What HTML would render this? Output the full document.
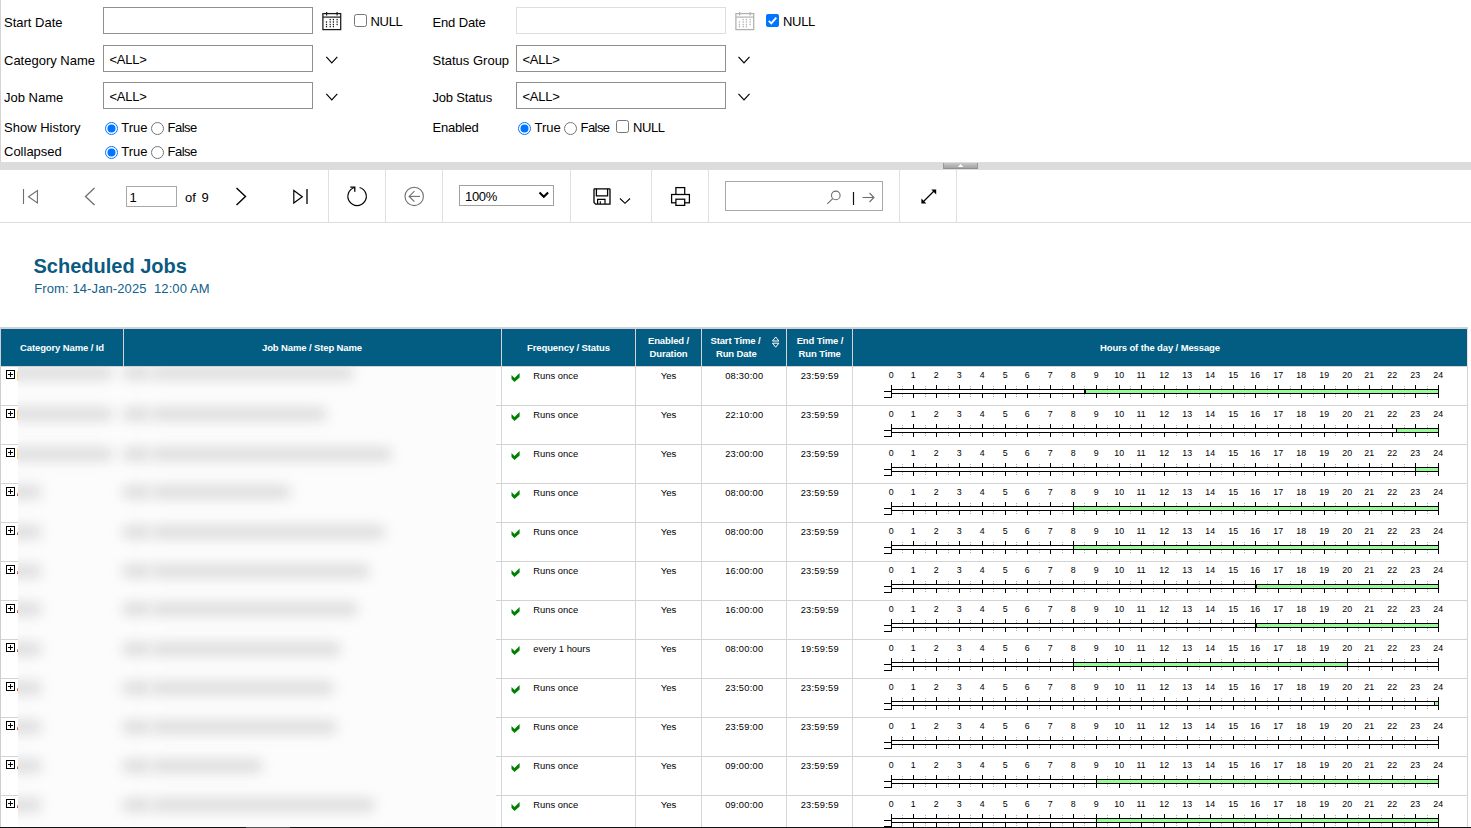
<!DOCTYPE html><html><head><meta charset="utf-8"><style>
html,body{margin:0;padding:0;}
body{width:1471px;height:828px;overflow:hidden;position:relative;background:#fff;font-family:"Liberation Sans",sans-serif;color:#000;}
.t{position:absolute;white-space:nowrap;}
.c{width:200px;text-align:center;}
.b{position:absolute;box-sizing:border-box;}
svg{position:absolute;overflow:visible;}
.bl{position:absolute;box-sizing:border-box;border-radius:3px;}
</style></head><body>
<div class="b" style="left:0px;top:0px;width:1px;height:162px;background:#d4d4d4"></div>
<div class="t" style="left:4.00px;top:16.00px;font-size:13px;line-height:13px;">Start Date</div>
<div class="t" style="left:4.00px;top:54.00px;font-size:13px;line-height:13px;">Category Name</div>
<div class="t" style="left:4.00px;top:91.00px;font-size:13px;line-height:13px;">Job Name</div>
<div class="t" style="left:4.00px;top:121.00px;font-size:13px;line-height:13px;">Show History</div>
<div class="t" style="left:4.00px;top:145.00px;font-size:13px;line-height:13px;">Collapsed</div>
<div class="t" style="left:432.50px;top:16.00px;font-size:13px;line-height:13px;letter-spacing:-0.15px">End Date</div>
<div class="t" style="left:432.50px;top:54.00px;font-size:13px;line-height:13px;">Status Group</div>
<div class="t" style="left:432.50px;top:91.00px;font-size:13px;line-height:13px;letter-spacing:-0.2px">Job Status</div>
<div class="t" style="left:432.50px;top:121.00px;font-size:13px;line-height:13px;letter-spacing:-0.25px">Enabled</div>
<div class="b" style="left:103px;top:7px;width:210px;height:27px;border:1px solid #8f8f8f;background:#fff"></div>
<div class="b" style="left:103px;top:45px;width:210px;height:27px;border:1px solid #8f8f8f;background:#fff"></div>
<div class="b" style="left:103px;top:82px;width:210px;height:27px;border:1px solid #8f8f8f;background:#fff"></div>
<div class="b" style="left:516px;top:7px;width:210px;height:27px;border:1px solid #dedede;background:#fff"></div>
<div class="b" style="left:516px;top:45px;width:210px;height:27px;border:1px solid #8f8f8f;background:#fff"></div>
<div class="b" style="left:516px;top:82px;width:210px;height:27px;border:1px solid #8f8f8f;background:#fff"></div>
<div class="t" style="left:109.50px;top:53.00px;font-size:13px;line-height:13px;letter-spacing:-0.25px">&lt;ALL&gt;</div>
<div class="t" style="left:109.50px;top:90.00px;font-size:13px;line-height:13px;letter-spacing:-0.25px">&lt;ALL&gt;</div>
<div class="t" style="left:522.50px;top:53.00px;font-size:13px;line-height:13px;letter-spacing:-0.25px">&lt;ALL&gt;</div>
<div class="t" style="left:522.50px;top:90.00px;font-size:13px;line-height:13px;letter-spacing:-0.25px">&lt;ALL&gt;</div>
<svg style="left:0;top:0" width="1" height="1"><polyline points="326.3,56.9 331.8,62.9 337.3,56.9" fill="none" stroke="#000" stroke-width="1.15"/></svg>
<svg style="left:0;top:0" width="1" height="1"><polyline points="326.3,93.9 331.8,99.9 337.3,93.9" fill="none" stroke="#000" stroke-width="1.15"/></svg>
<svg style="left:0;top:0" width="1" height="1"><polyline points="738.5,56.9 744,62.9 749.5,56.9" fill="none" stroke="#000" stroke-width="1.15"/></svg>
<svg style="left:0;top:0" width="1" height="1"><polyline points="738.5,93.9 744,99.9 749.5,93.9" fill="none" stroke="#000" stroke-width="1.15"/></svg>
<svg style="left:322px;top:12px" width="19" height="18" viewBox="0 0 19 18"><rect x="0.9" y="1.6" width="17.8" height="16" fill="none" stroke="#1a1a1a" stroke-width="1.25"/><line x1="0.9" y1="5.1" x2="18.7" y2="5.1" stroke="#1a1a1a" stroke-width="1.2"/><line x1="4.6" y1="0" x2="4.6" y2="3.4" stroke="#1a1a1a" stroke-width="1.2"/><line x1="15.1" y1="0" x2="15.1" y2="3.4" stroke="#1a1a1a" stroke-width="1.2"/><rect x="3.9" y="9.3" width="1.2" height="1.4" fill="#1a1a1a"/><rect x="3.9" y="11.8" width="1.2" height="1.4" fill="#1a1a1a"/><rect x="3.9" y="13.9" width="1.2" height="1.4" fill="#1a1a1a"/><rect x="7.6" y="6.9" width="1.2" height="1.4" fill="#1a1a1a"/><rect x="7.6" y="9.3" width="1.2" height="1.4" fill="#1a1a1a"/><rect x="7.6" y="11.8" width="1.2" height="1.4" fill="#1a1a1a"/><rect x="7.6" y="13.9" width="1.2" height="1.4" fill="#1a1a1a"/><rect x="10.8" y="6.9" width="1.2" height="1.4" fill="#1a1a1a"/><rect x="10.8" y="9.3" width="1.2" height="1.4" fill="#1a1a1a"/><rect x="10.8" y="11.8" width="1.2" height="1.4" fill="#1a1a1a"/><rect x="10.8" y="13.9" width="1.2" height="1.4" fill="#1a1a1a"/><rect x="14.5" y="6.9" width="1.2" height="1.4" fill="#1a1a1a"/><rect x="14.5" y="9.3" width="1.2" height="1.4" fill="#1a1a1a"/><rect x="14.5" y="11.8" width="1.2" height="1.4" fill="#1a1a1a"/></svg>
<svg style="left:735px;top:12px" width="19" height="18" viewBox="0 0 19 18"><rect x="0.9" y="1.6" width="17.8" height="16" fill="none" stroke="#b0b0b0" stroke-width="1.25"/><line x1="0.9" y1="5.1" x2="18.7" y2="5.1" stroke="#b0b0b0" stroke-width="1.2"/><line x1="4.6" y1="0" x2="4.6" y2="3.4" stroke="#b0b0b0" stroke-width="1.2"/><line x1="15.1" y1="0" x2="15.1" y2="3.4" stroke="#b0b0b0" stroke-width="1.2"/><rect x="3.9" y="9.3" width="1.2" height="1.4" fill="#b0b0b0"/><rect x="3.9" y="11.8" width="1.2" height="1.4" fill="#b0b0b0"/><rect x="3.9" y="13.9" width="1.2" height="1.4" fill="#b0b0b0"/><rect x="7.6" y="6.9" width="1.2" height="1.4" fill="#b0b0b0"/><rect x="7.6" y="9.3" width="1.2" height="1.4" fill="#b0b0b0"/><rect x="7.6" y="11.8" width="1.2" height="1.4" fill="#b0b0b0"/><rect x="7.6" y="13.9" width="1.2" height="1.4" fill="#b0b0b0"/><rect x="10.8" y="6.9" width="1.2" height="1.4" fill="#b0b0b0"/><rect x="10.8" y="9.3" width="1.2" height="1.4" fill="#b0b0b0"/><rect x="10.8" y="11.8" width="1.2" height="1.4" fill="#b0b0b0"/><rect x="10.8" y="13.9" width="1.2" height="1.4" fill="#b0b0b0"/><rect x="14.5" y="6.9" width="1.2" height="1.4" fill="#b0b0b0"/><rect x="14.5" y="9.3" width="1.2" height="1.4" fill="#b0b0b0"/><rect x="14.5" y="11.8" width="1.2" height="1.4" fill="#b0b0b0"/></svg>
<svg style="left:354px;top:14px" width="13" height="13" viewBox="0 0 13 13"><rect x="0.5" y="0.5" width="12" height="12" rx="2" fill="#fff" stroke="#767676" stroke-width="1"/></svg>
<div class="t" style="left:370.50px;top:15.00px;font-size:13px;line-height:13px;letter-spacing:-0.3px">NULL</div>
<svg style="left:766px;top:14px" width="13" height="13" viewBox="0 0 13 13"><rect x="0" y="0" width="13" height="13" rx="2" fill="#0075ff"/><polyline points="2.8,6.8 5.3,9.3 10.3,3.6" fill="none" stroke="#fff" stroke-width="1.9"/></svg>
<div class="t" style="left:783.00px;top:15.00px;font-size:13px;line-height:13px;letter-spacing:-0.3px">NULL</div>
<svg style="left:105px;top:122px" width="13" height="13" viewBox="0 0 13 13"><circle cx="6.5" cy="6.5" r="6" fill="#fff" stroke="#0075ff" stroke-width="1"/><circle cx="6.5" cy="6.5" r="4" fill="#0075ff"/></svg>
<div class="t" style="left:121.30px;top:121.00px;font-size:13px;line-height:13px;">True</div>
<svg style="left:151px;top:122px" width="13" height="13" viewBox="0 0 13 13"><circle cx="6.5" cy="6.5" r="6" fill="#fff" stroke="#767676" stroke-width="1"/></svg>
<div class="t" style="left:167.60px;top:121.00px;font-size:13px;line-height:13px;letter-spacing:-0.55px">False</div>
<svg style="left:105px;top:146px" width="13" height="13" viewBox="0 0 13 13"><circle cx="6.5" cy="6.5" r="6" fill="#fff" stroke="#0075ff" stroke-width="1"/><circle cx="6.5" cy="6.5" r="4" fill="#0075ff"/></svg>
<div class="t" style="left:121.30px;top:145.00px;font-size:13px;line-height:13px;">True</div>
<svg style="left:151px;top:146px" width="13" height="13" viewBox="0 0 13 13"><circle cx="6.5" cy="6.5" r="6" fill="#fff" stroke="#767676" stroke-width="1"/></svg>
<div class="t" style="left:167.60px;top:145.00px;font-size:13px;line-height:13px;letter-spacing:-0.55px">False</div>
<svg style="left:518px;top:122px" width="13" height="13" viewBox="0 0 13 13"><circle cx="6.5" cy="6.5" r="6" fill="#fff" stroke="#0075ff" stroke-width="1"/><circle cx="6.5" cy="6.5" r="4" fill="#0075ff"/></svg>
<div class="t" style="left:534.50px;top:121.00px;font-size:13px;line-height:13px;">True</div>
<svg style="left:564px;top:122px" width="13" height="13" viewBox="0 0 13 13"><circle cx="6.5" cy="6.5" r="6" fill="#fff" stroke="#767676" stroke-width="1"/></svg>
<div class="t" style="left:580.50px;top:121.00px;font-size:13px;line-height:13px;letter-spacing:-0.55px">False</div>
<svg style="left:616px;top:120px" width="13" height="13" viewBox="0 0 13 13"><rect x="0.5" y="0.5" width="12" height="12" rx="2" fill="#fff" stroke="#767676" stroke-width="1"/></svg>
<div class="t" style="left:633.00px;top:121.00px;font-size:13px;line-height:13px;letter-spacing:-0.4px">NULL</div>
<div class="b" style="left:0px;top:162px;width:1471px;height:8px;background:#dcdcdc"></div>
<div class="b" style="left:943px;top:163px;width:35px;height:6px;background:linear-gradient(#c8c8c8,#a4a4a4);border-left:1px solid #999;border-right:1px solid #999;border-bottom:1px solid #909090"></div>
<svg style="left:0;top:0" width="1" height="1"><polygon points="957.8,166.9 960.6,163.9 963.4,166.9" fill="#fff"/></svg>
<div class="b" style="left:0px;top:222px;width:1471px;height:1px;background:#dedede"></div>
<div class="b" style="left:328px;top:170px;width:1px;height:52px;background:#e0e0e0"></div>
<div class="b" style="left:385px;top:170px;width:1px;height:52px;background:#e0e0e0"></div>
<div class="b" style="left:442px;top:170px;width:1px;height:52px;background:#e0e0e0"></div>
<div class="b" style="left:570px;top:170px;width:1px;height:52px;background:#e0e0e0"></div>
<div class="b" style="left:651px;top:170px;width:1px;height:52px;background:#e0e0e0"></div>
<div class="b" style="left:708px;top:170px;width:1px;height:52px;background:#e0e0e0"></div>
<div class="b" style="left:899px;top:170px;width:1px;height:52px;background:#e0e0e0"></div>
<div class="b" style="left:956px;top:170px;width:1px;height:52px;background:#e0e0e0"></div>
<svg style="left:0;top:0" width="1" height="1"><line x1="23.5" y1="189" x2="23.5" y2="204" stroke="#6e6e6e" stroke-width="1.1"/><polygon points="37.4,190.5 37.4,203 28.5,196.8" fill="none" stroke="#6e6e6e" stroke-width="1.1"/></svg>
<svg style="left:0;top:0" width="1" height="1"><polyline points="94.5,188 85.5,196.5 94.5,205" fill="none" stroke="#6e6e6e" stroke-width="1.3"/></svg>
<div class="b" style="left:126px;top:186px;width:51px;height:21px;border:1px solid #a8a8a8;background:#fff"></div>
<div class="t" style="left:129.50px;top:191.00px;font-size:13px;line-height:13px;">1</div>
<div class="t" style="left:185.00px;top:191.00px;font-size:13px;line-height:13px;word-spacing:2px">of 9</div>
<svg style="left:0;top:0" width="1" height="1"><polyline points="236.5,188 245.5,196.5 236.5,205" fill="none" stroke="#000" stroke-width="1.4"/></svg>
<svg style="left:0;top:0" width="1" height="1"><polygon points="293.8,190.5 293.8,203 302.3,196.8" fill="none" stroke="#000" stroke-width="1.2"/><line x1="307" y1="189" x2="307" y2="204" stroke="#000" stroke-width="1.3"/></svg>
<svg style="left:0;top:0" width="1" height="1"><path d="M359.6,187.5 A9.2,9.2 0 1 1 354.6,187.5" fill="none" stroke="#000" stroke-width="1.2"/><path d="M350.3,187.2 H354.8 V191.8" fill="none" stroke="#000" stroke-width="1.3"/></svg>
<svg style="left:0;top:0" width="1" height="1"><circle cx="414.2" cy="196.4" r="9.2" fill="none" stroke="#6e6e6e" stroke-width="1.1"/><line x1="409" y1="196.4" x2="420" y2="196.4" stroke="#6e6e6e" stroke-width="1.1"/><polyline points="414.4,191.2 409.1,196.4 414.4,201.7" fill="none" stroke="#6e6e6e" stroke-width="1.1"/></svg>
<div class="b" style="left:459px;top:185px;width:95px;height:21px;border:1px solid #a0a0a0;background:#fff"></div>
<div class="t" style="left:465.00px;top:189.50px;font-size:13px;line-height:13px;letter-spacing:-0.3px">100%</div>
<svg style="left:0;top:0" width="1" height="1"><polyline points="539.5,192.5 543.8,196.8 548.1,192.5" fill="none" stroke="#000" stroke-width="2"/></svg>
<svg style="left:593px;top:188px" width="18" height="17" viewBox="0 0 18 17"><path d="M1.6,0.8 H16.3 Q17,0.8 17,1.5 V16.1 H2.7 L1,14.4 V1.5 Q1,0.8 1.6,0.8 Z" fill="none" stroke="#000" stroke-width="1.3"/><path d="M3.4,0.8 V7.9 H14.6 V0.8" fill="none" stroke="#000" stroke-width="1.3"/><path d="M4.6,16.1 V11.3 H12 V16.1" fill="none" stroke="#000" stroke-width="1.2"/><line x1="7.3" y1="13.3" x2="7.3" y2="16" stroke="#000" stroke-width="1.1"/></svg>
<svg style="left:0;top:0" width="1" height="1"><polyline points="620,198.5 625,203.3 630,198.5" fill="none" stroke="#000" stroke-width="1.1"/></svg>
<svg style="left:671px;top:187px" width="19" height="19" viewBox="0 0 19 19"><rect x="4.9" y="0.6" width="8.8" height="7" fill="#fff" stroke="#000" stroke-width="1.25"/><rect x="0.6" y="7.5" width="17.8" height="8.3" fill="#fff" stroke="#000" stroke-width="1.25"/><rect x="4.9" y="12.2" width="8.8" height="6.2" fill="#fff" stroke="#000" stroke-width="1.25"/></svg>
<div class="b" style="left:725px;top:181px;width:158px;height:30px;border:1px solid #a8a8a8;background:#fff"></div>
<svg style="left:0;top:0" width="1" height="1"><circle cx="835.8" cy="195.4" r="4.3" fill="none" stroke="#6e6e6e" stroke-width="1.1"/><line x1="832.7" y1="198.6" x2="827.3" y2="203.8" stroke="#6e6e6e" stroke-width="1.1"/><line x1="853.5" y1="192" x2="853.5" y2="205" stroke="#111" stroke-width="1.2"/><line x1="862.5" y1="197.5" x2="874" y2="197.5" stroke="#6e6e6e" stroke-width="1.1"/><polyline points="869.5,193 874,197.5 869.5,202" fill="none" stroke="#6e6e6e" stroke-width="1.1"/></svg>
<svg style="left:0;top:0" width="1" height="1"><line x1="923" y1="202" x2="934" y2="191" stroke="#000" stroke-width="1.3"/><polygon points="931.3,189.6 936.2,189.6 936.2,194.5" fill="#000"/><polygon points="921.4,198.6 921.4,203.5 926.3,203.5" fill="#000"/></svg>
<div class="t" style="left:33.50px;top:256.07px;font-size:20px;line-height:20px;color:#0b5a82;font-weight:bold;">Scheduled Jobs</div>
<div class="t" style="left:34.30px;top:282.00px;font-size:13px;line-height:13px;color:#12608a;letter-spacing:0.1px">From: 14-Jan-2025&nbsp; 12:00 AM</div>
<div class="b" style="left:0px;top:327px;width:1468px;height:2px;background:#d2d2d2"></div>
<div class="b" style="left:1px;top:329px;width:1466px;height:37px;background:#035d82"></div>
<div class="b" style="left:0px;top:327px;width:1px;height:501px;background:#cfcfcf"></div>
<div class="b" style="left:1467px;top:329px;width:1px;height:37px;background:#e6e0e0"></div>
<div class="b" style="left:1467px;top:366px;width:1px;height:462px;background:#d3d3d3"></div>
<div class="b" style="left:123px;top:329px;width:1px;height:37px;background:#d3d3d3"></div>
<div class="b" style="left:501px;top:329px;width:1px;height:37px;background:#d3d3d3"></div>
<div class="b" style="left:635px;top:329px;width:1px;height:37px;background:#d3d3d3"></div>
<div class="b" style="left:701px;top:329px;width:1px;height:37px;background:#d3d3d3"></div>
<div class="b" style="left:786px;top:329px;width:1px;height:37px;background:#d3d3d3"></div>
<div class="b" style="left:852px;top:329px;width:1px;height:37px;background:#d3d3d3"></div>
<div class="t c" style="left:-38.00px;top:343.36px;font-size:9.5px;line-height:9.5px;color:#fff;font-weight:bold;letter-spacing:-0.12px">Category Name / Id</div>
<div class="t c" style="left:212.00px;top:343.36px;font-size:9.5px;line-height:9.5px;color:#fff;font-weight:bold;letter-spacing:-0.12px">Job Name / Step Name</div>
<div class="t c" style="left:468.50px;top:343.36px;font-size:9.5px;line-height:9.5px;color:#fff;font-weight:bold;letter-spacing:-0.12px">Frequency / Status</div>
<div class="t c" style="left:568.50px;top:336.46px;font-size:9.5px;line-height:9.5px;color:#fff;font-weight:bold;letter-spacing:-0.12px">Enabled /</div>
<div class="t c" style="left:568.50px;top:349.46px;font-size:9.5px;line-height:9.5px;color:#fff;font-weight:bold;letter-spacing:-0.12px">Duration</div>
<div class="t c" style="left:635.50px;top:336.46px;font-size:9.5px;line-height:9.5px;color:#fff;font-weight:bold;letter-spacing:-0.12px">Start Time /</div>
<div class="t c" style="left:636.30px;top:349.46px;font-size:9.5px;line-height:9.5px;color:#fff;font-weight:bold;letter-spacing:-0.12px">Run Date</div>
<div class="t c" style="left:720.00px;top:336.46px;font-size:9.5px;line-height:9.5px;color:#fff;font-weight:bold;letter-spacing:-0.12px">End Time /</div>
<div class="t c" style="left:719.70px;top:349.46px;font-size:9.5px;line-height:9.5px;color:#fff;font-weight:bold;letter-spacing:-0.12px">Run Time</div>
<div class="t c" style="left:1060.00px;top:343.36px;font-size:9.5px;line-height:9.5px;color:#fff;font-weight:bold;letter-spacing:-0.12px">Hours of the day / Message</div>
<svg style="left:0;top:0" width="1" height="1"><polygon points="772.5,341 775.7,337 778.9,341" fill="none" stroke="#fff" stroke-width="1"/><polygon points="772.5,343.2 775.7,347.2 778.9,343.2" fill="none" stroke="#fff" stroke-width="1"/></svg>
<div class="b" style="left:1px;top:366px;width:1466px;height:1px;background:#d3d3d3"></div>
<div class="b" style="left:123px;top:366px;width:1px;height:39px;background:#d6d6d6"></div>
<div class="b" style="left:501px;top:366px;width:1px;height:39px;background:#d6d6d6"></div>
<div class="b" style="left:635px;top:366px;width:1px;height:39px;background:#d6d6d6"></div>
<div class="b" style="left:701px;top:366px;width:1px;height:39px;background:#d6d6d6"></div>
<div class="b" style="left:786px;top:366px;width:1px;height:39px;background:#d6d6d6"></div>
<div class="b" style="left:852px;top:366px;width:1px;height:39px;background:#d6d6d6"></div>
<svg style="left:6px;top:370px" width="9" height="9"><rect x="0.5" y="0.5" width="8" height="8" fill="#fff" stroke="#000" stroke-width="1"/><path d="M2 4.5H7M4.5 2V7" stroke="#000" stroke-width="1"/></svg>
<svg style="left:0;top:366px" width="1" height="1"><polygon points="511.5,9 514.5,12 519.6,7 519.6,11.5 514.5,16 511.5,13" fill="#008000"/></svg>
<div class="t" style="left:533.30px;top:371.44px;font-size:9.4px;line-height:9.4px;">Runs once</div>
<div class="t c" style="left:568.50px;top:371.27px;font-size:9.6px;line-height:9.6px;">Yes</div>
<div class="t c" style="left:644.30px;top:372.03px;font-size:9.3px;line-height:9.3px;letter-spacing:0.25px">08:30:00</div>
<div class="t c" style="left:719.80px;top:372.03px;font-size:9.3px;line-height:9.3px;letter-spacing:0.25px">23:59:59</div>
<svg style="left:0;top:366px" width="1" height="1"><g transform="scale(0.9 1)" font-family="Liberation Sans" font-size="9.8" text-anchor="middle" fill="#000"><text x="990.22" y="12">0</text><text x="1014.67" y="12">1</text><text x="1040.22" y="12">2</text><text x="1065.78" y="12">3</text><text x="1091.33" y="12">4</text><text x="1116.89" y="12">5</text><text x="1141.33" y="12">6</text><text x="1166.89" y="12">7</text><text x="1192.44" y="12">8</text><text x="1218.00" y="12">9</text><text x="1243.56" y="12">10</text><text x="1268.00" y="12">11</text><text x="1293.56" y="12">12</text><text x="1319.11" y="12">13</text><text x="1344.67" y="12">14</text><text x="1370.22" y="12">15</text><text x="1394.67" y="12">16</text><text x="1420.22" y="12">17</text><text x="1445.78" y="12">18</text><text x="1471.33" y="12">19</text><text x="1496.89" y="12">20</text><text x="1521.33" y="12">21</text><text x="1546.89" y="12">22</text><text x="1572.44" y="12">23</text><text x="1598.00" y="12">24</text></g><path d="M891 19h1v13h-1zM913 19h1v13h-1zM936 19h1v13h-1zM959 19h1v13h-1zM982 19h1v13h-1zM1005 19h1v13h-1zM1027 19h1v13h-1zM1050 19h1v13h-1zM1073 19h1v13h-1zM1096 19h1v13h-1zM1119 19h1v13h-1zM1141 19h1v13h-1zM1164 19h1v13h-1zM1187 19h1v13h-1zM1210 19h1v13h-1zM1233 19h1v13h-1zM1255 19h1v13h-1zM1278 19h1v13h-1zM1301 19h1v13h-1zM1324 19h1v13h-1zM1347 19h1v13h-1zM1369 19h1v13h-1zM1392 19h1v13h-1zM1415 19h1v13h-1zM1438 19h1v13h-1zM891 23h548v5h-548zM884 25h8v1h-8zM884 31h8v1h-8z" fill="#000" shape-rendering="crispEdges"/><path d="M902 20h1v1h-1zM902 22h1v1h-1zM902 28h1v1h-1zM902 30h1v1h-1zM925 20h1v1h-1zM925 22h1v1h-1zM925 28h1v1h-1zM925 30h1v1h-1zM948 20h1v1h-1zM948 22h1v1h-1zM948 28h1v1h-1zM948 30h1v1h-1zM970 20h1v1h-1zM970 22h1v1h-1zM970 28h1v1h-1zM970 30h1v1h-1zM993 20h1v1h-1zM993 22h1v1h-1zM993 28h1v1h-1zM993 30h1v1h-1zM1016 20h1v1h-1zM1016 22h1v1h-1zM1016 28h1v1h-1zM1016 30h1v1h-1zM1039 20h1v1h-1zM1039 22h1v1h-1zM1039 28h1v1h-1zM1039 30h1v1h-1zM1062 20h1v1h-1zM1062 22h1v1h-1zM1062 28h1v1h-1zM1062 30h1v1h-1zM1084 20h1v1h-1zM1084 22h1v1h-1zM1084 28h1v1h-1zM1084 30h1v1h-1zM1107 20h1v1h-1zM1107 22h1v1h-1zM1107 28h1v1h-1zM1107 30h1v1h-1zM1130 20h1v1h-1zM1130 22h1v1h-1zM1130 28h1v1h-1zM1130 30h1v1h-1zM1153 20h1v1h-1zM1153 22h1v1h-1zM1153 28h1v1h-1zM1153 30h1v1h-1zM1176 20h1v1h-1zM1176 22h1v1h-1zM1176 28h1v1h-1zM1176 30h1v1h-1zM1199 20h1v1h-1zM1199 22h1v1h-1zM1199 28h1v1h-1zM1199 30h1v1h-1zM1221 20h1v1h-1zM1221 22h1v1h-1zM1221 28h1v1h-1zM1221 30h1v1h-1zM1244 20h1v1h-1zM1244 22h1v1h-1zM1244 28h1v1h-1zM1244 30h1v1h-1zM1267 20h1v1h-1zM1267 22h1v1h-1zM1267 28h1v1h-1zM1267 30h1v1h-1zM1290 20h1v1h-1zM1290 22h1v1h-1zM1290 28h1v1h-1zM1290 30h1v1h-1zM1313 20h1v1h-1zM1313 22h1v1h-1zM1313 28h1v1h-1zM1313 30h1v1h-1zM1335 20h1v1h-1zM1335 22h1v1h-1zM1335 28h1v1h-1zM1335 30h1v1h-1zM1358 20h1v1h-1zM1358 22h1v1h-1zM1358 28h1v1h-1zM1358 30h1v1h-1zM1381 20h1v1h-1zM1381 22h1v1h-1zM1381 28h1v1h-1zM1381 30h1v1h-1zM1404 20h1v1h-1zM1404 22h1v1h-1zM1404 28h1v1h-1zM1404 30h1v1h-1zM1427 20h1v1h-1zM1427 22h1v1h-1zM1427 28h1v1h-1zM1427 30h1v1h-1z" fill="#b0b0b0" shape-rendering="crispEdges"/><g shape-rendering="crispEdges"><rect x="892" y="24" width="192" height="3" fill="#fff"/><rect x="1086" y="24" width="352" height="3" fill="#98fb98"/></g></svg>
<div class="b" style="left:1px;top:405px;width:1466px;height:1px;background:#d3d3d3"></div>
<div class="b" style="left:123px;top:405px;width:1px;height:39px;background:#d6d6d6"></div>
<div class="b" style="left:501px;top:405px;width:1px;height:39px;background:#d6d6d6"></div>
<div class="b" style="left:635px;top:405px;width:1px;height:39px;background:#d6d6d6"></div>
<div class="b" style="left:701px;top:405px;width:1px;height:39px;background:#d6d6d6"></div>
<div class="b" style="left:786px;top:405px;width:1px;height:39px;background:#d6d6d6"></div>
<div class="b" style="left:852px;top:405px;width:1px;height:39px;background:#d6d6d6"></div>
<svg style="left:6px;top:409px" width="9" height="9"><rect x="0.5" y="0.5" width="8" height="8" fill="#fff" stroke="#000" stroke-width="1"/><path d="M2 4.5H7M4.5 2V7" stroke="#000" stroke-width="1"/></svg>
<svg style="left:0;top:405px" width="1" height="1"><polygon points="511.5,9 514.5,12 519.6,7 519.6,11.5 514.5,16 511.5,13" fill="#008000"/></svg>
<div class="t" style="left:533.30px;top:410.44px;font-size:9.4px;line-height:9.4px;">Runs once</div>
<div class="t c" style="left:568.50px;top:410.27px;font-size:9.6px;line-height:9.6px;">Yes</div>
<div class="t c" style="left:644.30px;top:411.03px;font-size:9.3px;line-height:9.3px;letter-spacing:0.25px">22:10:00</div>
<div class="t c" style="left:719.80px;top:411.03px;font-size:9.3px;line-height:9.3px;letter-spacing:0.25px">23:59:59</div>
<svg style="left:0;top:405px" width="1" height="1"><g transform="scale(0.9 1)" font-family="Liberation Sans" font-size="9.8" text-anchor="middle" fill="#000"><text x="990.22" y="12">0</text><text x="1014.67" y="12">1</text><text x="1040.22" y="12">2</text><text x="1065.78" y="12">3</text><text x="1091.33" y="12">4</text><text x="1116.89" y="12">5</text><text x="1141.33" y="12">6</text><text x="1166.89" y="12">7</text><text x="1192.44" y="12">8</text><text x="1218.00" y="12">9</text><text x="1243.56" y="12">10</text><text x="1268.00" y="12">11</text><text x="1293.56" y="12">12</text><text x="1319.11" y="12">13</text><text x="1344.67" y="12">14</text><text x="1370.22" y="12">15</text><text x="1394.67" y="12">16</text><text x="1420.22" y="12">17</text><text x="1445.78" y="12">18</text><text x="1471.33" y="12">19</text><text x="1496.89" y="12">20</text><text x="1521.33" y="12">21</text><text x="1546.89" y="12">22</text><text x="1572.44" y="12">23</text><text x="1598.00" y="12">24</text></g><path d="M891 19h1v13h-1zM913 19h1v13h-1zM936 19h1v13h-1zM959 19h1v13h-1zM982 19h1v13h-1zM1005 19h1v13h-1zM1027 19h1v13h-1zM1050 19h1v13h-1zM1073 19h1v13h-1zM1096 19h1v13h-1zM1119 19h1v13h-1zM1141 19h1v13h-1zM1164 19h1v13h-1zM1187 19h1v13h-1zM1210 19h1v13h-1zM1233 19h1v13h-1zM1255 19h1v13h-1zM1278 19h1v13h-1zM1301 19h1v13h-1zM1324 19h1v13h-1zM1347 19h1v13h-1zM1369 19h1v13h-1zM1392 19h1v13h-1zM1415 19h1v13h-1zM1438 19h1v13h-1zM891 23h548v5h-548zM884 25h8v1h-8zM884 31h8v1h-8z" fill="#000" shape-rendering="crispEdges"/><path d="M902 20h1v1h-1zM902 22h1v1h-1zM902 28h1v1h-1zM902 30h1v1h-1zM925 20h1v1h-1zM925 22h1v1h-1zM925 28h1v1h-1zM925 30h1v1h-1zM948 20h1v1h-1zM948 22h1v1h-1zM948 28h1v1h-1zM948 30h1v1h-1zM970 20h1v1h-1zM970 22h1v1h-1zM970 28h1v1h-1zM970 30h1v1h-1zM993 20h1v1h-1zM993 22h1v1h-1zM993 28h1v1h-1zM993 30h1v1h-1zM1016 20h1v1h-1zM1016 22h1v1h-1zM1016 28h1v1h-1zM1016 30h1v1h-1zM1039 20h1v1h-1zM1039 22h1v1h-1zM1039 28h1v1h-1zM1039 30h1v1h-1zM1062 20h1v1h-1zM1062 22h1v1h-1zM1062 28h1v1h-1zM1062 30h1v1h-1zM1084 20h1v1h-1zM1084 22h1v1h-1zM1084 28h1v1h-1zM1084 30h1v1h-1zM1107 20h1v1h-1zM1107 22h1v1h-1zM1107 28h1v1h-1zM1107 30h1v1h-1zM1130 20h1v1h-1zM1130 22h1v1h-1zM1130 28h1v1h-1zM1130 30h1v1h-1zM1153 20h1v1h-1zM1153 22h1v1h-1zM1153 28h1v1h-1zM1153 30h1v1h-1zM1176 20h1v1h-1zM1176 22h1v1h-1zM1176 28h1v1h-1zM1176 30h1v1h-1zM1199 20h1v1h-1zM1199 22h1v1h-1zM1199 28h1v1h-1zM1199 30h1v1h-1zM1221 20h1v1h-1zM1221 22h1v1h-1zM1221 28h1v1h-1zM1221 30h1v1h-1zM1244 20h1v1h-1zM1244 22h1v1h-1zM1244 28h1v1h-1zM1244 30h1v1h-1zM1267 20h1v1h-1zM1267 22h1v1h-1zM1267 28h1v1h-1zM1267 30h1v1h-1zM1290 20h1v1h-1zM1290 22h1v1h-1zM1290 28h1v1h-1zM1290 30h1v1h-1zM1313 20h1v1h-1zM1313 22h1v1h-1zM1313 28h1v1h-1zM1313 30h1v1h-1zM1335 20h1v1h-1zM1335 22h1v1h-1zM1335 28h1v1h-1zM1335 30h1v1h-1zM1358 20h1v1h-1zM1358 22h1v1h-1zM1358 28h1v1h-1zM1358 30h1v1h-1zM1381 20h1v1h-1zM1381 22h1v1h-1zM1381 28h1v1h-1zM1381 30h1v1h-1zM1404 20h1v1h-1zM1404 22h1v1h-1zM1404 28h1v1h-1zM1404 30h1v1h-1zM1427 20h1v1h-1zM1427 22h1v1h-1zM1427 28h1v1h-1zM1427 30h1v1h-1z" fill="#b0b0b0" shape-rendering="crispEdges"/><g shape-rendering="crispEdges"><rect x="892" y="24" width="504" height="3" fill="#fff"/><rect x="1397" y="24" width="41" height="3" fill="#98fb98"/></g></svg>
<div class="b" style="left:1px;top:444px;width:1466px;height:1px;background:#d3d3d3"></div>
<div class="b" style="left:123px;top:444px;width:1px;height:39px;background:#d6d6d6"></div>
<div class="b" style="left:501px;top:444px;width:1px;height:39px;background:#d6d6d6"></div>
<div class="b" style="left:635px;top:444px;width:1px;height:39px;background:#d6d6d6"></div>
<div class="b" style="left:701px;top:444px;width:1px;height:39px;background:#d6d6d6"></div>
<div class="b" style="left:786px;top:444px;width:1px;height:39px;background:#d6d6d6"></div>
<div class="b" style="left:852px;top:444px;width:1px;height:39px;background:#d6d6d6"></div>
<svg style="left:6px;top:448px" width="9" height="9"><rect x="0.5" y="0.5" width="8" height="8" fill="#fff" stroke="#000" stroke-width="1"/><path d="M2 4.5H7M4.5 2V7" stroke="#000" stroke-width="1"/></svg>
<svg style="left:0;top:444px" width="1" height="1"><polygon points="511.5,9 514.5,12 519.6,7 519.6,11.5 514.5,16 511.5,13" fill="#008000"/></svg>
<div class="t" style="left:533.30px;top:449.44px;font-size:9.4px;line-height:9.4px;">Runs once</div>
<div class="t c" style="left:568.50px;top:449.27px;font-size:9.6px;line-height:9.6px;">Yes</div>
<div class="t c" style="left:644.30px;top:450.03px;font-size:9.3px;line-height:9.3px;letter-spacing:0.25px">23:00:00</div>
<div class="t c" style="left:719.80px;top:450.03px;font-size:9.3px;line-height:9.3px;letter-spacing:0.25px">23:59:59</div>
<svg style="left:0;top:444px" width="1" height="1"><g transform="scale(0.9 1)" font-family="Liberation Sans" font-size="9.8" text-anchor="middle" fill="#000"><text x="990.22" y="12">0</text><text x="1014.67" y="12">1</text><text x="1040.22" y="12">2</text><text x="1065.78" y="12">3</text><text x="1091.33" y="12">4</text><text x="1116.89" y="12">5</text><text x="1141.33" y="12">6</text><text x="1166.89" y="12">7</text><text x="1192.44" y="12">8</text><text x="1218.00" y="12">9</text><text x="1243.56" y="12">10</text><text x="1268.00" y="12">11</text><text x="1293.56" y="12">12</text><text x="1319.11" y="12">13</text><text x="1344.67" y="12">14</text><text x="1370.22" y="12">15</text><text x="1394.67" y="12">16</text><text x="1420.22" y="12">17</text><text x="1445.78" y="12">18</text><text x="1471.33" y="12">19</text><text x="1496.89" y="12">20</text><text x="1521.33" y="12">21</text><text x="1546.89" y="12">22</text><text x="1572.44" y="12">23</text><text x="1598.00" y="12">24</text></g><path d="M891 19h1v13h-1zM913 19h1v13h-1zM936 19h1v13h-1zM959 19h1v13h-1zM982 19h1v13h-1zM1005 19h1v13h-1zM1027 19h1v13h-1zM1050 19h1v13h-1zM1073 19h1v13h-1zM1096 19h1v13h-1zM1119 19h1v13h-1zM1141 19h1v13h-1zM1164 19h1v13h-1zM1187 19h1v13h-1zM1210 19h1v13h-1zM1233 19h1v13h-1zM1255 19h1v13h-1zM1278 19h1v13h-1zM1301 19h1v13h-1zM1324 19h1v13h-1zM1347 19h1v13h-1zM1369 19h1v13h-1zM1392 19h1v13h-1zM1415 19h1v13h-1zM1438 19h1v13h-1zM891 23h548v5h-548zM884 25h8v1h-8zM884 31h8v1h-8z" fill="#000" shape-rendering="crispEdges"/><path d="M902 20h1v1h-1zM902 22h1v1h-1zM902 28h1v1h-1zM902 30h1v1h-1zM925 20h1v1h-1zM925 22h1v1h-1zM925 28h1v1h-1zM925 30h1v1h-1zM948 20h1v1h-1zM948 22h1v1h-1zM948 28h1v1h-1zM948 30h1v1h-1zM970 20h1v1h-1zM970 22h1v1h-1zM970 28h1v1h-1zM970 30h1v1h-1zM993 20h1v1h-1zM993 22h1v1h-1zM993 28h1v1h-1zM993 30h1v1h-1zM1016 20h1v1h-1zM1016 22h1v1h-1zM1016 28h1v1h-1zM1016 30h1v1h-1zM1039 20h1v1h-1zM1039 22h1v1h-1zM1039 28h1v1h-1zM1039 30h1v1h-1zM1062 20h1v1h-1zM1062 22h1v1h-1zM1062 28h1v1h-1zM1062 30h1v1h-1zM1084 20h1v1h-1zM1084 22h1v1h-1zM1084 28h1v1h-1zM1084 30h1v1h-1zM1107 20h1v1h-1zM1107 22h1v1h-1zM1107 28h1v1h-1zM1107 30h1v1h-1zM1130 20h1v1h-1zM1130 22h1v1h-1zM1130 28h1v1h-1zM1130 30h1v1h-1zM1153 20h1v1h-1zM1153 22h1v1h-1zM1153 28h1v1h-1zM1153 30h1v1h-1zM1176 20h1v1h-1zM1176 22h1v1h-1zM1176 28h1v1h-1zM1176 30h1v1h-1zM1199 20h1v1h-1zM1199 22h1v1h-1zM1199 28h1v1h-1zM1199 30h1v1h-1zM1221 20h1v1h-1zM1221 22h1v1h-1zM1221 28h1v1h-1zM1221 30h1v1h-1zM1244 20h1v1h-1zM1244 22h1v1h-1zM1244 28h1v1h-1zM1244 30h1v1h-1zM1267 20h1v1h-1zM1267 22h1v1h-1zM1267 28h1v1h-1zM1267 30h1v1h-1zM1290 20h1v1h-1zM1290 22h1v1h-1zM1290 28h1v1h-1zM1290 30h1v1h-1zM1313 20h1v1h-1zM1313 22h1v1h-1zM1313 28h1v1h-1zM1313 30h1v1h-1zM1335 20h1v1h-1zM1335 22h1v1h-1zM1335 28h1v1h-1zM1335 30h1v1h-1zM1358 20h1v1h-1zM1358 22h1v1h-1zM1358 28h1v1h-1zM1358 30h1v1h-1zM1381 20h1v1h-1zM1381 22h1v1h-1zM1381 28h1v1h-1zM1381 30h1v1h-1zM1404 20h1v1h-1zM1404 22h1v1h-1zM1404 28h1v1h-1zM1404 30h1v1h-1zM1427 20h1v1h-1zM1427 22h1v1h-1zM1427 28h1v1h-1zM1427 30h1v1h-1z" fill="#b0b0b0" shape-rendering="crispEdges"/><g shape-rendering="crispEdges"><rect x="892" y="24" width="523" height="3" fill="#fff"/><rect x="1416" y="24" width="22" height="3" fill="#98fb98"/></g></svg>
<div class="b" style="left:1px;top:483px;width:1466px;height:1px;background:#d3d3d3"></div>
<div class="b" style="left:123px;top:483px;width:1px;height:39px;background:#d6d6d6"></div>
<div class="b" style="left:501px;top:483px;width:1px;height:39px;background:#d6d6d6"></div>
<div class="b" style="left:635px;top:483px;width:1px;height:39px;background:#d6d6d6"></div>
<div class="b" style="left:701px;top:483px;width:1px;height:39px;background:#d6d6d6"></div>
<div class="b" style="left:786px;top:483px;width:1px;height:39px;background:#d6d6d6"></div>
<div class="b" style="left:852px;top:483px;width:1px;height:39px;background:#d6d6d6"></div>
<svg style="left:6px;top:487px" width="9" height="9"><rect x="0.5" y="0.5" width="8" height="8" fill="#fff" stroke="#000" stroke-width="1"/><path d="M2 4.5H7M4.5 2V7" stroke="#000" stroke-width="1"/></svg>
<svg style="left:0;top:483px" width="1" height="1"><polygon points="511.5,9 514.5,12 519.6,7 519.6,11.5 514.5,16 511.5,13" fill="#008000"/></svg>
<div class="t" style="left:533.30px;top:488.44px;font-size:9.4px;line-height:9.4px;">Runs once</div>
<div class="t c" style="left:568.50px;top:488.27px;font-size:9.6px;line-height:9.6px;">Yes</div>
<div class="t c" style="left:644.30px;top:489.03px;font-size:9.3px;line-height:9.3px;letter-spacing:0.25px">08:00:00</div>
<div class="t c" style="left:719.80px;top:489.03px;font-size:9.3px;line-height:9.3px;letter-spacing:0.25px">23:59:59</div>
<svg style="left:0;top:483px" width="1" height="1"><g transform="scale(0.9 1)" font-family="Liberation Sans" font-size="9.8" text-anchor="middle" fill="#000"><text x="990.22" y="12">0</text><text x="1014.67" y="12">1</text><text x="1040.22" y="12">2</text><text x="1065.78" y="12">3</text><text x="1091.33" y="12">4</text><text x="1116.89" y="12">5</text><text x="1141.33" y="12">6</text><text x="1166.89" y="12">7</text><text x="1192.44" y="12">8</text><text x="1218.00" y="12">9</text><text x="1243.56" y="12">10</text><text x="1268.00" y="12">11</text><text x="1293.56" y="12">12</text><text x="1319.11" y="12">13</text><text x="1344.67" y="12">14</text><text x="1370.22" y="12">15</text><text x="1394.67" y="12">16</text><text x="1420.22" y="12">17</text><text x="1445.78" y="12">18</text><text x="1471.33" y="12">19</text><text x="1496.89" y="12">20</text><text x="1521.33" y="12">21</text><text x="1546.89" y="12">22</text><text x="1572.44" y="12">23</text><text x="1598.00" y="12">24</text></g><path d="M891 19h1v13h-1zM913 19h1v13h-1zM936 19h1v13h-1zM959 19h1v13h-1zM982 19h1v13h-1zM1005 19h1v13h-1zM1027 19h1v13h-1zM1050 19h1v13h-1zM1073 19h1v13h-1zM1096 19h1v13h-1zM1119 19h1v13h-1zM1141 19h1v13h-1zM1164 19h1v13h-1zM1187 19h1v13h-1zM1210 19h1v13h-1zM1233 19h1v13h-1zM1255 19h1v13h-1zM1278 19h1v13h-1zM1301 19h1v13h-1zM1324 19h1v13h-1zM1347 19h1v13h-1zM1369 19h1v13h-1zM1392 19h1v13h-1zM1415 19h1v13h-1zM1438 19h1v13h-1zM891 23h548v5h-548zM884 25h8v1h-8zM884 31h8v1h-8z" fill="#000" shape-rendering="crispEdges"/><path d="M902 20h1v1h-1zM902 22h1v1h-1zM902 28h1v1h-1zM902 30h1v1h-1zM925 20h1v1h-1zM925 22h1v1h-1zM925 28h1v1h-1zM925 30h1v1h-1zM948 20h1v1h-1zM948 22h1v1h-1zM948 28h1v1h-1zM948 30h1v1h-1zM970 20h1v1h-1zM970 22h1v1h-1zM970 28h1v1h-1zM970 30h1v1h-1zM993 20h1v1h-1zM993 22h1v1h-1zM993 28h1v1h-1zM993 30h1v1h-1zM1016 20h1v1h-1zM1016 22h1v1h-1zM1016 28h1v1h-1zM1016 30h1v1h-1zM1039 20h1v1h-1zM1039 22h1v1h-1zM1039 28h1v1h-1zM1039 30h1v1h-1zM1062 20h1v1h-1zM1062 22h1v1h-1zM1062 28h1v1h-1zM1062 30h1v1h-1zM1084 20h1v1h-1zM1084 22h1v1h-1zM1084 28h1v1h-1zM1084 30h1v1h-1zM1107 20h1v1h-1zM1107 22h1v1h-1zM1107 28h1v1h-1zM1107 30h1v1h-1zM1130 20h1v1h-1zM1130 22h1v1h-1zM1130 28h1v1h-1zM1130 30h1v1h-1zM1153 20h1v1h-1zM1153 22h1v1h-1zM1153 28h1v1h-1zM1153 30h1v1h-1zM1176 20h1v1h-1zM1176 22h1v1h-1zM1176 28h1v1h-1zM1176 30h1v1h-1zM1199 20h1v1h-1zM1199 22h1v1h-1zM1199 28h1v1h-1zM1199 30h1v1h-1zM1221 20h1v1h-1zM1221 22h1v1h-1zM1221 28h1v1h-1zM1221 30h1v1h-1zM1244 20h1v1h-1zM1244 22h1v1h-1zM1244 28h1v1h-1zM1244 30h1v1h-1zM1267 20h1v1h-1zM1267 22h1v1h-1zM1267 28h1v1h-1zM1267 30h1v1h-1zM1290 20h1v1h-1zM1290 22h1v1h-1zM1290 28h1v1h-1zM1290 30h1v1h-1zM1313 20h1v1h-1zM1313 22h1v1h-1zM1313 28h1v1h-1zM1313 30h1v1h-1zM1335 20h1v1h-1zM1335 22h1v1h-1zM1335 28h1v1h-1zM1335 30h1v1h-1zM1358 20h1v1h-1zM1358 22h1v1h-1zM1358 28h1v1h-1zM1358 30h1v1h-1zM1381 20h1v1h-1zM1381 22h1v1h-1zM1381 28h1v1h-1zM1381 30h1v1h-1zM1404 20h1v1h-1zM1404 22h1v1h-1zM1404 28h1v1h-1zM1404 30h1v1h-1zM1427 20h1v1h-1zM1427 22h1v1h-1zM1427 28h1v1h-1zM1427 30h1v1h-1z" fill="#b0b0b0" shape-rendering="crispEdges"/><g shape-rendering="crispEdges"><rect x="892" y="24" width="181" height="3" fill="#fff"/><rect x="1074" y="24" width="364" height="3" fill="#98fb98"/></g></svg>
<div class="b" style="left:1px;top:522px;width:1466px;height:1px;background:#d3d3d3"></div>
<div class="b" style="left:123px;top:522px;width:1px;height:39px;background:#d6d6d6"></div>
<div class="b" style="left:501px;top:522px;width:1px;height:39px;background:#d6d6d6"></div>
<div class="b" style="left:635px;top:522px;width:1px;height:39px;background:#d6d6d6"></div>
<div class="b" style="left:701px;top:522px;width:1px;height:39px;background:#d6d6d6"></div>
<div class="b" style="left:786px;top:522px;width:1px;height:39px;background:#d6d6d6"></div>
<div class="b" style="left:852px;top:522px;width:1px;height:39px;background:#d6d6d6"></div>
<svg style="left:6px;top:526px" width="9" height="9"><rect x="0.5" y="0.5" width="8" height="8" fill="#fff" stroke="#000" stroke-width="1"/><path d="M2 4.5H7M4.5 2V7" stroke="#000" stroke-width="1"/></svg>
<svg style="left:0;top:522px" width="1" height="1"><polygon points="511.5,9 514.5,12 519.6,7 519.6,11.5 514.5,16 511.5,13" fill="#008000"/></svg>
<div class="t" style="left:533.30px;top:527.44px;font-size:9.4px;line-height:9.4px;">Runs once</div>
<div class="t c" style="left:568.50px;top:527.27px;font-size:9.6px;line-height:9.6px;">Yes</div>
<div class="t c" style="left:644.30px;top:528.03px;font-size:9.3px;line-height:9.3px;letter-spacing:0.25px">08:00:00</div>
<div class="t c" style="left:719.80px;top:528.03px;font-size:9.3px;line-height:9.3px;letter-spacing:0.25px">23:59:59</div>
<svg style="left:0;top:522px" width="1" height="1"><g transform="scale(0.9 1)" font-family="Liberation Sans" font-size="9.8" text-anchor="middle" fill="#000"><text x="990.22" y="12">0</text><text x="1014.67" y="12">1</text><text x="1040.22" y="12">2</text><text x="1065.78" y="12">3</text><text x="1091.33" y="12">4</text><text x="1116.89" y="12">5</text><text x="1141.33" y="12">6</text><text x="1166.89" y="12">7</text><text x="1192.44" y="12">8</text><text x="1218.00" y="12">9</text><text x="1243.56" y="12">10</text><text x="1268.00" y="12">11</text><text x="1293.56" y="12">12</text><text x="1319.11" y="12">13</text><text x="1344.67" y="12">14</text><text x="1370.22" y="12">15</text><text x="1394.67" y="12">16</text><text x="1420.22" y="12">17</text><text x="1445.78" y="12">18</text><text x="1471.33" y="12">19</text><text x="1496.89" y="12">20</text><text x="1521.33" y="12">21</text><text x="1546.89" y="12">22</text><text x="1572.44" y="12">23</text><text x="1598.00" y="12">24</text></g><path d="M891 19h1v13h-1zM913 19h1v13h-1zM936 19h1v13h-1zM959 19h1v13h-1zM982 19h1v13h-1zM1005 19h1v13h-1zM1027 19h1v13h-1zM1050 19h1v13h-1zM1073 19h1v13h-1zM1096 19h1v13h-1zM1119 19h1v13h-1zM1141 19h1v13h-1zM1164 19h1v13h-1zM1187 19h1v13h-1zM1210 19h1v13h-1zM1233 19h1v13h-1zM1255 19h1v13h-1zM1278 19h1v13h-1zM1301 19h1v13h-1zM1324 19h1v13h-1zM1347 19h1v13h-1zM1369 19h1v13h-1zM1392 19h1v13h-1zM1415 19h1v13h-1zM1438 19h1v13h-1zM891 23h548v5h-548zM884 25h8v1h-8zM884 31h8v1h-8z" fill="#000" shape-rendering="crispEdges"/><path d="M902 20h1v1h-1zM902 22h1v1h-1zM902 28h1v1h-1zM902 30h1v1h-1zM925 20h1v1h-1zM925 22h1v1h-1zM925 28h1v1h-1zM925 30h1v1h-1zM948 20h1v1h-1zM948 22h1v1h-1zM948 28h1v1h-1zM948 30h1v1h-1zM970 20h1v1h-1zM970 22h1v1h-1zM970 28h1v1h-1zM970 30h1v1h-1zM993 20h1v1h-1zM993 22h1v1h-1zM993 28h1v1h-1zM993 30h1v1h-1zM1016 20h1v1h-1zM1016 22h1v1h-1zM1016 28h1v1h-1zM1016 30h1v1h-1zM1039 20h1v1h-1zM1039 22h1v1h-1zM1039 28h1v1h-1zM1039 30h1v1h-1zM1062 20h1v1h-1zM1062 22h1v1h-1zM1062 28h1v1h-1zM1062 30h1v1h-1zM1084 20h1v1h-1zM1084 22h1v1h-1zM1084 28h1v1h-1zM1084 30h1v1h-1zM1107 20h1v1h-1zM1107 22h1v1h-1zM1107 28h1v1h-1zM1107 30h1v1h-1zM1130 20h1v1h-1zM1130 22h1v1h-1zM1130 28h1v1h-1zM1130 30h1v1h-1zM1153 20h1v1h-1zM1153 22h1v1h-1zM1153 28h1v1h-1zM1153 30h1v1h-1zM1176 20h1v1h-1zM1176 22h1v1h-1zM1176 28h1v1h-1zM1176 30h1v1h-1zM1199 20h1v1h-1zM1199 22h1v1h-1zM1199 28h1v1h-1zM1199 30h1v1h-1zM1221 20h1v1h-1zM1221 22h1v1h-1zM1221 28h1v1h-1zM1221 30h1v1h-1zM1244 20h1v1h-1zM1244 22h1v1h-1zM1244 28h1v1h-1zM1244 30h1v1h-1zM1267 20h1v1h-1zM1267 22h1v1h-1zM1267 28h1v1h-1zM1267 30h1v1h-1zM1290 20h1v1h-1zM1290 22h1v1h-1zM1290 28h1v1h-1zM1290 30h1v1h-1zM1313 20h1v1h-1zM1313 22h1v1h-1zM1313 28h1v1h-1zM1313 30h1v1h-1zM1335 20h1v1h-1zM1335 22h1v1h-1zM1335 28h1v1h-1zM1335 30h1v1h-1zM1358 20h1v1h-1zM1358 22h1v1h-1zM1358 28h1v1h-1zM1358 30h1v1h-1zM1381 20h1v1h-1zM1381 22h1v1h-1zM1381 28h1v1h-1zM1381 30h1v1h-1zM1404 20h1v1h-1zM1404 22h1v1h-1zM1404 28h1v1h-1zM1404 30h1v1h-1zM1427 20h1v1h-1zM1427 22h1v1h-1zM1427 28h1v1h-1zM1427 30h1v1h-1z" fill="#b0b0b0" shape-rendering="crispEdges"/><g shape-rendering="crispEdges"><rect x="892" y="24" width="181" height="3" fill="#fff"/><rect x="1074" y="24" width="364" height="3" fill="#98fb98"/></g></svg>
<div class="b" style="left:1px;top:561px;width:1466px;height:1px;background:#d3d3d3"></div>
<div class="b" style="left:123px;top:561px;width:1px;height:39px;background:#d6d6d6"></div>
<div class="b" style="left:501px;top:561px;width:1px;height:39px;background:#d6d6d6"></div>
<div class="b" style="left:635px;top:561px;width:1px;height:39px;background:#d6d6d6"></div>
<div class="b" style="left:701px;top:561px;width:1px;height:39px;background:#d6d6d6"></div>
<div class="b" style="left:786px;top:561px;width:1px;height:39px;background:#d6d6d6"></div>
<div class="b" style="left:852px;top:561px;width:1px;height:39px;background:#d6d6d6"></div>
<svg style="left:6px;top:565px" width="9" height="9"><rect x="0.5" y="0.5" width="8" height="8" fill="#fff" stroke="#000" stroke-width="1"/><path d="M2 4.5H7M4.5 2V7" stroke="#000" stroke-width="1"/></svg>
<svg style="left:0;top:561px" width="1" height="1"><polygon points="511.5,9 514.5,12 519.6,7 519.6,11.5 514.5,16 511.5,13" fill="#008000"/></svg>
<div class="t" style="left:533.30px;top:566.44px;font-size:9.4px;line-height:9.4px;">Runs once</div>
<div class="t c" style="left:568.50px;top:566.27px;font-size:9.6px;line-height:9.6px;">Yes</div>
<div class="t c" style="left:644.30px;top:567.03px;font-size:9.3px;line-height:9.3px;letter-spacing:0.25px">16:00:00</div>
<div class="t c" style="left:719.80px;top:567.03px;font-size:9.3px;line-height:9.3px;letter-spacing:0.25px">23:59:59</div>
<svg style="left:0;top:561px" width="1" height="1"><g transform="scale(0.9 1)" font-family="Liberation Sans" font-size="9.8" text-anchor="middle" fill="#000"><text x="990.22" y="12">0</text><text x="1014.67" y="12">1</text><text x="1040.22" y="12">2</text><text x="1065.78" y="12">3</text><text x="1091.33" y="12">4</text><text x="1116.89" y="12">5</text><text x="1141.33" y="12">6</text><text x="1166.89" y="12">7</text><text x="1192.44" y="12">8</text><text x="1218.00" y="12">9</text><text x="1243.56" y="12">10</text><text x="1268.00" y="12">11</text><text x="1293.56" y="12">12</text><text x="1319.11" y="12">13</text><text x="1344.67" y="12">14</text><text x="1370.22" y="12">15</text><text x="1394.67" y="12">16</text><text x="1420.22" y="12">17</text><text x="1445.78" y="12">18</text><text x="1471.33" y="12">19</text><text x="1496.89" y="12">20</text><text x="1521.33" y="12">21</text><text x="1546.89" y="12">22</text><text x="1572.44" y="12">23</text><text x="1598.00" y="12">24</text></g><path d="M891 19h1v13h-1zM913 19h1v13h-1zM936 19h1v13h-1zM959 19h1v13h-1zM982 19h1v13h-1zM1005 19h1v13h-1zM1027 19h1v13h-1zM1050 19h1v13h-1zM1073 19h1v13h-1zM1096 19h1v13h-1zM1119 19h1v13h-1zM1141 19h1v13h-1zM1164 19h1v13h-1zM1187 19h1v13h-1zM1210 19h1v13h-1zM1233 19h1v13h-1zM1255 19h1v13h-1zM1278 19h1v13h-1zM1301 19h1v13h-1zM1324 19h1v13h-1zM1347 19h1v13h-1zM1369 19h1v13h-1zM1392 19h1v13h-1zM1415 19h1v13h-1zM1438 19h1v13h-1zM891 23h548v5h-548zM884 25h8v1h-8zM884 31h8v1h-8z" fill="#000" shape-rendering="crispEdges"/><path d="M902 20h1v1h-1zM902 22h1v1h-1zM902 28h1v1h-1zM902 30h1v1h-1zM925 20h1v1h-1zM925 22h1v1h-1zM925 28h1v1h-1zM925 30h1v1h-1zM948 20h1v1h-1zM948 22h1v1h-1zM948 28h1v1h-1zM948 30h1v1h-1zM970 20h1v1h-1zM970 22h1v1h-1zM970 28h1v1h-1zM970 30h1v1h-1zM993 20h1v1h-1zM993 22h1v1h-1zM993 28h1v1h-1zM993 30h1v1h-1zM1016 20h1v1h-1zM1016 22h1v1h-1zM1016 28h1v1h-1zM1016 30h1v1h-1zM1039 20h1v1h-1zM1039 22h1v1h-1zM1039 28h1v1h-1zM1039 30h1v1h-1zM1062 20h1v1h-1zM1062 22h1v1h-1zM1062 28h1v1h-1zM1062 30h1v1h-1zM1084 20h1v1h-1zM1084 22h1v1h-1zM1084 28h1v1h-1zM1084 30h1v1h-1zM1107 20h1v1h-1zM1107 22h1v1h-1zM1107 28h1v1h-1zM1107 30h1v1h-1zM1130 20h1v1h-1zM1130 22h1v1h-1zM1130 28h1v1h-1zM1130 30h1v1h-1zM1153 20h1v1h-1zM1153 22h1v1h-1zM1153 28h1v1h-1zM1153 30h1v1h-1zM1176 20h1v1h-1zM1176 22h1v1h-1zM1176 28h1v1h-1zM1176 30h1v1h-1zM1199 20h1v1h-1zM1199 22h1v1h-1zM1199 28h1v1h-1zM1199 30h1v1h-1zM1221 20h1v1h-1zM1221 22h1v1h-1zM1221 28h1v1h-1zM1221 30h1v1h-1zM1244 20h1v1h-1zM1244 22h1v1h-1zM1244 28h1v1h-1zM1244 30h1v1h-1zM1267 20h1v1h-1zM1267 22h1v1h-1zM1267 28h1v1h-1zM1267 30h1v1h-1zM1290 20h1v1h-1zM1290 22h1v1h-1zM1290 28h1v1h-1zM1290 30h1v1h-1zM1313 20h1v1h-1zM1313 22h1v1h-1zM1313 28h1v1h-1zM1313 30h1v1h-1zM1335 20h1v1h-1zM1335 22h1v1h-1zM1335 28h1v1h-1zM1335 30h1v1h-1zM1358 20h1v1h-1zM1358 22h1v1h-1zM1358 28h1v1h-1zM1358 30h1v1h-1zM1381 20h1v1h-1zM1381 22h1v1h-1zM1381 28h1v1h-1zM1381 30h1v1h-1zM1404 20h1v1h-1zM1404 22h1v1h-1zM1404 28h1v1h-1zM1404 30h1v1h-1zM1427 20h1v1h-1zM1427 22h1v1h-1zM1427 28h1v1h-1zM1427 30h1v1h-1z" fill="#b0b0b0" shape-rendering="crispEdges"/><g shape-rendering="crispEdges"><rect x="892" y="24" width="363" height="3" fill="#fff"/><rect x="1257" y="24" width="181" height="3" fill="#98fb98"/></g></svg>
<div class="b" style="left:1px;top:600px;width:1466px;height:1px;background:#d3d3d3"></div>
<div class="b" style="left:123px;top:600px;width:1px;height:39px;background:#d6d6d6"></div>
<div class="b" style="left:501px;top:600px;width:1px;height:39px;background:#d6d6d6"></div>
<div class="b" style="left:635px;top:600px;width:1px;height:39px;background:#d6d6d6"></div>
<div class="b" style="left:701px;top:600px;width:1px;height:39px;background:#d6d6d6"></div>
<div class="b" style="left:786px;top:600px;width:1px;height:39px;background:#d6d6d6"></div>
<div class="b" style="left:852px;top:600px;width:1px;height:39px;background:#d6d6d6"></div>
<svg style="left:6px;top:604px" width="9" height="9"><rect x="0.5" y="0.5" width="8" height="8" fill="#fff" stroke="#000" stroke-width="1"/><path d="M2 4.5H7M4.5 2V7" stroke="#000" stroke-width="1"/></svg>
<svg style="left:0;top:600px" width="1" height="1"><polygon points="511.5,9 514.5,12 519.6,7 519.6,11.5 514.5,16 511.5,13" fill="#008000"/></svg>
<div class="t" style="left:533.30px;top:605.44px;font-size:9.4px;line-height:9.4px;">Runs once</div>
<div class="t c" style="left:568.50px;top:605.27px;font-size:9.6px;line-height:9.6px;">Yes</div>
<div class="t c" style="left:644.30px;top:606.03px;font-size:9.3px;line-height:9.3px;letter-spacing:0.25px">16:00:00</div>
<div class="t c" style="left:719.80px;top:606.03px;font-size:9.3px;line-height:9.3px;letter-spacing:0.25px">23:59:59</div>
<svg style="left:0;top:600px" width="1" height="1"><g transform="scale(0.9 1)" font-family="Liberation Sans" font-size="9.8" text-anchor="middle" fill="#000"><text x="990.22" y="12">0</text><text x="1014.67" y="12">1</text><text x="1040.22" y="12">2</text><text x="1065.78" y="12">3</text><text x="1091.33" y="12">4</text><text x="1116.89" y="12">5</text><text x="1141.33" y="12">6</text><text x="1166.89" y="12">7</text><text x="1192.44" y="12">8</text><text x="1218.00" y="12">9</text><text x="1243.56" y="12">10</text><text x="1268.00" y="12">11</text><text x="1293.56" y="12">12</text><text x="1319.11" y="12">13</text><text x="1344.67" y="12">14</text><text x="1370.22" y="12">15</text><text x="1394.67" y="12">16</text><text x="1420.22" y="12">17</text><text x="1445.78" y="12">18</text><text x="1471.33" y="12">19</text><text x="1496.89" y="12">20</text><text x="1521.33" y="12">21</text><text x="1546.89" y="12">22</text><text x="1572.44" y="12">23</text><text x="1598.00" y="12">24</text></g><path d="M891 19h1v13h-1zM913 19h1v13h-1zM936 19h1v13h-1zM959 19h1v13h-1zM982 19h1v13h-1zM1005 19h1v13h-1zM1027 19h1v13h-1zM1050 19h1v13h-1zM1073 19h1v13h-1zM1096 19h1v13h-1zM1119 19h1v13h-1zM1141 19h1v13h-1zM1164 19h1v13h-1zM1187 19h1v13h-1zM1210 19h1v13h-1zM1233 19h1v13h-1zM1255 19h1v13h-1zM1278 19h1v13h-1zM1301 19h1v13h-1zM1324 19h1v13h-1zM1347 19h1v13h-1zM1369 19h1v13h-1zM1392 19h1v13h-1zM1415 19h1v13h-1zM1438 19h1v13h-1zM891 23h548v5h-548zM884 25h8v1h-8zM884 31h8v1h-8z" fill="#000" shape-rendering="crispEdges"/><path d="M902 20h1v1h-1zM902 22h1v1h-1zM902 28h1v1h-1zM902 30h1v1h-1zM925 20h1v1h-1zM925 22h1v1h-1zM925 28h1v1h-1zM925 30h1v1h-1zM948 20h1v1h-1zM948 22h1v1h-1zM948 28h1v1h-1zM948 30h1v1h-1zM970 20h1v1h-1zM970 22h1v1h-1zM970 28h1v1h-1zM970 30h1v1h-1zM993 20h1v1h-1zM993 22h1v1h-1zM993 28h1v1h-1zM993 30h1v1h-1zM1016 20h1v1h-1zM1016 22h1v1h-1zM1016 28h1v1h-1zM1016 30h1v1h-1zM1039 20h1v1h-1zM1039 22h1v1h-1zM1039 28h1v1h-1zM1039 30h1v1h-1zM1062 20h1v1h-1zM1062 22h1v1h-1zM1062 28h1v1h-1zM1062 30h1v1h-1zM1084 20h1v1h-1zM1084 22h1v1h-1zM1084 28h1v1h-1zM1084 30h1v1h-1zM1107 20h1v1h-1zM1107 22h1v1h-1zM1107 28h1v1h-1zM1107 30h1v1h-1zM1130 20h1v1h-1zM1130 22h1v1h-1zM1130 28h1v1h-1zM1130 30h1v1h-1zM1153 20h1v1h-1zM1153 22h1v1h-1zM1153 28h1v1h-1zM1153 30h1v1h-1zM1176 20h1v1h-1zM1176 22h1v1h-1zM1176 28h1v1h-1zM1176 30h1v1h-1zM1199 20h1v1h-1zM1199 22h1v1h-1zM1199 28h1v1h-1zM1199 30h1v1h-1zM1221 20h1v1h-1zM1221 22h1v1h-1zM1221 28h1v1h-1zM1221 30h1v1h-1zM1244 20h1v1h-1zM1244 22h1v1h-1zM1244 28h1v1h-1zM1244 30h1v1h-1zM1267 20h1v1h-1zM1267 22h1v1h-1zM1267 28h1v1h-1zM1267 30h1v1h-1zM1290 20h1v1h-1zM1290 22h1v1h-1zM1290 28h1v1h-1zM1290 30h1v1h-1zM1313 20h1v1h-1zM1313 22h1v1h-1zM1313 28h1v1h-1zM1313 30h1v1h-1zM1335 20h1v1h-1zM1335 22h1v1h-1zM1335 28h1v1h-1zM1335 30h1v1h-1zM1358 20h1v1h-1zM1358 22h1v1h-1zM1358 28h1v1h-1zM1358 30h1v1h-1zM1381 20h1v1h-1zM1381 22h1v1h-1zM1381 28h1v1h-1zM1381 30h1v1h-1zM1404 20h1v1h-1zM1404 22h1v1h-1zM1404 28h1v1h-1zM1404 30h1v1h-1zM1427 20h1v1h-1zM1427 22h1v1h-1zM1427 28h1v1h-1zM1427 30h1v1h-1z" fill="#b0b0b0" shape-rendering="crispEdges"/><g shape-rendering="crispEdges"><rect x="892" y="24" width="363" height="3" fill="#fff"/><rect x="1257" y="24" width="181" height="3" fill="#98fb98"/></g></svg>
<div class="b" style="left:1px;top:639px;width:1466px;height:1px;background:#d3d3d3"></div>
<div class="b" style="left:123px;top:639px;width:1px;height:39px;background:#d6d6d6"></div>
<div class="b" style="left:501px;top:639px;width:1px;height:39px;background:#d6d6d6"></div>
<div class="b" style="left:635px;top:639px;width:1px;height:39px;background:#d6d6d6"></div>
<div class="b" style="left:701px;top:639px;width:1px;height:39px;background:#d6d6d6"></div>
<div class="b" style="left:786px;top:639px;width:1px;height:39px;background:#d6d6d6"></div>
<div class="b" style="left:852px;top:639px;width:1px;height:39px;background:#d6d6d6"></div>
<svg style="left:6px;top:643px" width="9" height="9"><rect x="0.5" y="0.5" width="8" height="8" fill="#fff" stroke="#000" stroke-width="1"/><path d="M2 4.5H7M4.5 2V7" stroke="#000" stroke-width="1"/></svg>
<svg style="left:0;top:639px" width="1" height="1"><polygon points="511.5,9 514.5,12 519.6,7 519.6,11.5 514.5,16 511.5,13" fill="#008000"/></svg>
<div class="t" style="left:533.30px;top:644.44px;font-size:9.4px;line-height:9.4px;">every 1 hours</div>
<div class="t c" style="left:568.50px;top:644.27px;font-size:9.6px;line-height:9.6px;">Yes</div>
<div class="t c" style="left:644.30px;top:645.03px;font-size:9.3px;line-height:9.3px;letter-spacing:0.25px">08:00:00</div>
<div class="t c" style="left:719.80px;top:645.03px;font-size:9.3px;line-height:9.3px;letter-spacing:0.25px">19:59:59</div>
<svg style="left:0;top:639px" width="1" height="1"><g transform="scale(0.9 1)" font-family="Liberation Sans" font-size="9.8" text-anchor="middle" fill="#000"><text x="990.22" y="12">0</text><text x="1014.67" y="12">1</text><text x="1040.22" y="12">2</text><text x="1065.78" y="12">3</text><text x="1091.33" y="12">4</text><text x="1116.89" y="12">5</text><text x="1141.33" y="12">6</text><text x="1166.89" y="12">7</text><text x="1192.44" y="12">8</text><text x="1218.00" y="12">9</text><text x="1243.56" y="12">10</text><text x="1268.00" y="12">11</text><text x="1293.56" y="12">12</text><text x="1319.11" y="12">13</text><text x="1344.67" y="12">14</text><text x="1370.22" y="12">15</text><text x="1394.67" y="12">16</text><text x="1420.22" y="12">17</text><text x="1445.78" y="12">18</text><text x="1471.33" y="12">19</text><text x="1496.89" y="12">20</text><text x="1521.33" y="12">21</text><text x="1546.89" y="12">22</text><text x="1572.44" y="12">23</text><text x="1598.00" y="12">24</text></g><path d="M891 19h1v13h-1zM913 19h1v13h-1zM936 19h1v13h-1zM959 19h1v13h-1zM982 19h1v13h-1zM1005 19h1v13h-1zM1027 19h1v13h-1zM1050 19h1v13h-1zM1073 19h1v13h-1zM1096 19h1v13h-1zM1119 19h1v13h-1zM1141 19h1v13h-1zM1164 19h1v13h-1zM1187 19h1v13h-1zM1210 19h1v13h-1zM1233 19h1v13h-1zM1255 19h1v13h-1zM1278 19h1v13h-1zM1301 19h1v13h-1zM1324 19h1v13h-1zM1347 19h1v13h-1zM1369 19h1v13h-1zM1392 19h1v13h-1zM1415 19h1v13h-1zM1438 19h1v13h-1zM891 23h548v5h-548zM884 25h8v1h-8zM884 31h8v1h-8z" fill="#000" shape-rendering="crispEdges"/><path d="M902 20h1v1h-1zM902 22h1v1h-1zM902 28h1v1h-1zM902 30h1v1h-1zM925 20h1v1h-1zM925 22h1v1h-1zM925 28h1v1h-1zM925 30h1v1h-1zM948 20h1v1h-1zM948 22h1v1h-1zM948 28h1v1h-1zM948 30h1v1h-1zM970 20h1v1h-1zM970 22h1v1h-1zM970 28h1v1h-1zM970 30h1v1h-1zM993 20h1v1h-1zM993 22h1v1h-1zM993 28h1v1h-1zM993 30h1v1h-1zM1016 20h1v1h-1zM1016 22h1v1h-1zM1016 28h1v1h-1zM1016 30h1v1h-1zM1039 20h1v1h-1zM1039 22h1v1h-1zM1039 28h1v1h-1zM1039 30h1v1h-1zM1062 20h1v1h-1zM1062 22h1v1h-1zM1062 28h1v1h-1zM1062 30h1v1h-1zM1084 20h1v1h-1zM1084 22h1v1h-1zM1084 28h1v1h-1zM1084 30h1v1h-1zM1107 20h1v1h-1zM1107 22h1v1h-1zM1107 28h1v1h-1zM1107 30h1v1h-1zM1130 20h1v1h-1zM1130 22h1v1h-1zM1130 28h1v1h-1zM1130 30h1v1h-1zM1153 20h1v1h-1zM1153 22h1v1h-1zM1153 28h1v1h-1zM1153 30h1v1h-1zM1176 20h1v1h-1zM1176 22h1v1h-1zM1176 28h1v1h-1zM1176 30h1v1h-1zM1199 20h1v1h-1zM1199 22h1v1h-1zM1199 28h1v1h-1zM1199 30h1v1h-1zM1221 20h1v1h-1zM1221 22h1v1h-1zM1221 28h1v1h-1zM1221 30h1v1h-1zM1244 20h1v1h-1zM1244 22h1v1h-1zM1244 28h1v1h-1zM1244 30h1v1h-1zM1267 20h1v1h-1zM1267 22h1v1h-1zM1267 28h1v1h-1zM1267 30h1v1h-1zM1290 20h1v1h-1zM1290 22h1v1h-1zM1290 28h1v1h-1zM1290 30h1v1h-1zM1313 20h1v1h-1zM1313 22h1v1h-1zM1313 28h1v1h-1zM1313 30h1v1h-1zM1335 20h1v1h-1zM1335 22h1v1h-1zM1335 28h1v1h-1zM1335 30h1v1h-1zM1358 20h1v1h-1zM1358 22h1v1h-1zM1358 28h1v1h-1zM1358 30h1v1h-1zM1381 20h1v1h-1zM1381 22h1v1h-1zM1381 28h1v1h-1zM1381 30h1v1h-1zM1404 20h1v1h-1zM1404 22h1v1h-1zM1404 28h1v1h-1zM1404 30h1v1h-1zM1427 20h1v1h-1zM1427 22h1v1h-1zM1427 28h1v1h-1zM1427 30h1v1h-1z" fill="#b0b0b0" shape-rendering="crispEdges"/><g shape-rendering="crispEdges"><rect x="892" y="24" width="181" height="3" fill="#fff"/><rect x="1074" y="24" width="273" height="3" fill="#98fb98"/><rect x="1348" y="24" width="90" height="3" fill="#fff"/></g></svg>
<div class="b" style="left:1px;top:678px;width:1466px;height:1px;background:#d3d3d3"></div>
<div class="b" style="left:123px;top:678px;width:1px;height:39px;background:#d6d6d6"></div>
<div class="b" style="left:501px;top:678px;width:1px;height:39px;background:#d6d6d6"></div>
<div class="b" style="left:635px;top:678px;width:1px;height:39px;background:#d6d6d6"></div>
<div class="b" style="left:701px;top:678px;width:1px;height:39px;background:#d6d6d6"></div>
<div class="b" style="left:786px;top:678px;width:1px;height:39px;background:#d6d6d6"></div>
<div class="b" style="left:852px;top:678px;width:1px;height:39px;background:#d6d6d6"></div>
<svg style="left:6px;top:682px" width="9" height="9"><rect x="0.5" y="0.5" width="8" height="8" fill="#fff" stroke="#000" stroke-width="1"/><path d="M2 4.5H7M4.5 2V7" stroke="#000" stroke-width="1"/></svg>
<svg style="left:0;top:678px" width="1" height="1"><polygon points="511.5,9 514.5,12 519.6,7 519.6,11.5 514.5,16 511.5,13" fill="#008000"/></svg>
<div class="t" style="left:533.30px;top:683.44px;font-size:9.4px;line-height:9.4px;">Runs once</div>
<div class="t c" style="left:568.50px;top:683.27px;font-size:9.6px;line-height:9.6px;">Yes</div>
<div class="t c" style="left:644.30px;top:684.03px;font-size:9.3px;line-height:9.3px;letter-spacing:0.25px">23:50:00</div>
<div class="t c" style="left:719.80px;top:684.03px;font-size:9.3px;line-height:9.3px;letter-spacing:0.25px">23:59:59</div>
<svg style="left:0;top:678px" width="1" height="1"><g transform="scale(0.9 1)" font-family="Liberation Sans" font-size="9.8" text-anchor="middle" fill="#000"><text x="990.22" y="12">0</text><text x="1014.67" y="12">1</text><text x="1040.22" y="12">2</text><text x="1065.78" y="12">3</text><text x="1091.33" y="12">4</text><text x="1116.89" y="12">5</text><text x="1141.33" y="12">6</text><text x="1166.89" y="12">7</text><text x="1192.44" y="12">8</text><text x="1218.00" y="12">9</text><text x="1243.56" y="12">10</text><text x="1268.00" y="12">11</text><text x="1293.56" y="12">12</text><text x="1319.11" y="12">13</text><text x="1344.67" y="12">14</text><text x="1370.22" y="12">15</text><text x="1394.67" y="12">16</text><text x="1420.22" y="12">17</text><text x="1445.78" y="12">18</text><text x="1471.33" y="12">19</text><text x="1496.89" y="12">20</text><text x="1521.33" y="12">21</text><text x="1546.89" y="12">22</text><text x="1572.44" y="12">23</text><text x="1598.00" y="12">24</text></g><path d="M891 19h1v13h-1zM913 19h1v13h-1zM936 19h1v13h-1zM959 19h1v13h-1zM982 19h1v13h-1zM1005 19h1v13h-1zM1027 19h1v13h-1zM1050 19h1v13h-1zM1073 19h1v13h-1zM1096 19h1v13h-1zM1119 19h1v13h-1zM1141 19h1v13h-1zM1164 19h1v13h-1zM1187 19h1v13h-1zM1210 19h1v13h-1zM1233 19h1v13h-1zM1255 19h1v13h-1zM1278 19h1v13h-1zM1301 19h1v13h-1zM1324 19h1v13h-1zM1347 19h1v13h-1zM1369 19h1v13h-1zM1392 19h1v13h-1zM1415 19h1v13h-1zM1438 19h1v13h-1zM891 23h548v5h-548zM884 25h8v1h-8zM884 31h8v1h-8z" fill="#000" shape-rendering="crispEdges"/><path d="M902 20h1v1h-1zM902 22h1v1h-1zM902 28h1v1h-1zM902 30h1v1h-1zM925 20h1v1h-1zM925 22h1v1h-1zM925 28h1v1h-1zM925 30h1v1h-1zM948 20h1v1h-1zM948 22h1v1h-1zM948 28h1v1h-1zM948 30h1v1h-1zM970 20h1v1h-1zM970 22h1v1h-1zM970 28h1v1h-1zM970 30h1v1h-1zM993 20h1v1h-1zM993 22h1v1h-1zM993 28h1v1h-1zM993 30h1v1h-1zM1016 20h1v1h-1zM1016 22h1v1h-1zM1016 28h1v1h-1zM1016 30h1v1h-1zM1039 20h1v1h-1zM1039 22h1v1h-1zM1039 28h1v1h-1zM1039 30h1v1h-1zM1062 20h1v1h-1zM1062 22h1v1h-1zM1062 28h1v1h-1zM1062 30h1v1h-1zM1084 20h1v1h-1zM1084 22h1v1h-1zM1084 28h1v1h-1zM1084 30h1v1h-1zM1107 20h1v1h-1zM1107 22h1v1h-1zM1107 28h1v1h-1zM1107 30h1v1h-1zM1130 20h1v1h-1zM1130 22h1v1h-1zM1130 28h1v1h-1zM1130 30h1v1h-1zM1153 20h1v1h-1zM1153 22h1v1h-1zM1153 28h1v1h-1zM1153 30h1v1h-1zM1176 20h1v1h-1zM1176 22h1v1h-1zM1176 28h1v1h-1zM1176 30h1v1h-1zM1199 20h1v1h-1zM1199 22h1v1h-1zM1199 28h1v1h-1zM1199 30h1v1h-1zM1221 20h1v1h-1zM1221 22h1v1h-1zM1221 28h1v1h-1zM1221 30h1v1h-1zM1244 20h1v1h-1zM1244 22h1v1h-1zM1244 28h1v1h-1zM1244 30h1v1h-1zM1267 20h1v1h-1zM1267 22h1v1h-1zM1267 28h1v1h-1zM1267 30h1v1h-1zM1290 20h1v1h-1zM1290 22h1v1h-1zM1290 28h1v1h-1zM1290 30h1v1h-1zM1313 20h1v1h-1zM1313 22h1v1h-1zM1313 28h1v1h-1zM1313 30h1v1h-1zM1335 20h1v1h-1zM1335 22h1v1h-1zM1335 28h1v1h-1zM1335 30h1v1h-1zM1358 20h1v1h-1zM1358 22h1v1h-1zM1358 28h1v1h-1zM1358 30h1v1h-1zM1381 20h1v1h-1zM1381 22h1v1h-1zM1381 28h1v1h-1zM1381 30h1v1h-1zM1404 20h1v1h-1zM1404 22h1v1h-1zM1404 28h1v1h-1zM1404 30h1v1h-1zM1427 20h1v1h-1zM1427 22h1v1h-1zM1427 28h1v1h-1zM1427 30h1v1h-1z" fill="#b0b0b0" shape-rendering="crispEdges"/><g shape-rendering="crispEdges"><rect x="892" y="24" width="542" height="3" fill="#fff"/><rect x="1435" y="24" width="3" height="3" fill="#98fb98"/></g></svg>
<div class="b" style="left:1px;top:717px;width:1466px;height:1px;background:#d3d3d3"></div>
<div class="b" style="left:123px;top:717px;width:1px;height:39px;background:#d6d6d6"></div>
<div class="b" style="left:501px;top:717px;width:1px;height:39px;background:#d6d6d6"></div>
<div class="b" style="left:635px;top:717px;width:1px;height:39px;background:#d6d6d6"></div>
<div class="b" style="left:701px;top:717px;width:1px;height:39px;background:#d6d6d6"></div>
<div class="b" style="left:786px;top:717px;width:1px;height:39px;background:#d6d6d6"></div>
<div class="b" style="left:852px;top:717px;width:1px;height:39px;background:#d6d6d6"></div>
<svg style="left:6px;top:721px" width="9" height="9"><rect x="0.5" y="0.5" width="8" height="8" fill="#fff" stroke="#000" stroke-width="1"/><path d="M2 4.5H7M4.5 2V7" stroke="#000" stroke-width="1"/></svg>
<svg style="left:0;top:717px" width="1" height="1"><polygon points="511.5,9 514.5,12 519.6,7 519.6,11.5 514.5,16 511.5,13" fill="#008000"/></svg>
<div class="t" style="left:533.30px;top:722.44px;font-size:9.4px;line-height:9.4px;">Runs once</div>
<div class="t c" style="left:568.50px;top:722.27px;font-size:9.6px;line-height:9.6px;">Yes</div>
<div class="t c" style="left:644.30px;top:723.03px;font-size:9.3px;line-height:9.3px;letter-spacing:0.25px">23:59:00</div>
<div class="t c" style="left:719.80px;top:723.03px;font-size:9.3px;line-height:9.3px;letter-spacing:0.25px">23:59:59</div>
<svg style="left:0;top:717px" width="1" height="1"><g transform="scale(0.9 1)" font-family="Liberation Sans" font-size="9.8" text-anchor="middle" fill="#000"><text x="990.22" y="12">0</text><text x="1014.67" y="12">1</text><text x="1040.22" y="12">2</text><text x="1065.78" y="12">3</text><text x="1091.33" y="12">4</text><text x="1116.89" y="12">5</text><text x="1141.33" y="12">6</text><text x="1166.89" y="12">7</text><text x="1192.44" y="12">8</text><text x="1218.00" y="12">9</text><text x="1243.56" y="12">10</text><text x="1268.00" y="12">11</text><text x="1293.56" y="12">12</text><text x="1319.11" y="12">13</text><text x="1344.67" y="12">14</text><text x="1370.22" y="12">15</text><text x="1394.67" y="12">16</text><text x="1420.22" y="12">17</text><text x="1445.78" y="12">18</text><text x="1471.33" y="12">19</text><text x="1496.89" y="12">20</text><text x="1521.33" y="12">21</text><text x="1546.89" y="12">22</text><text x="1572.44" y="12">23</text><text x="1598.00" y="12">24</text></g><path d="M891 19h1v13h-1zM913 19h1v13h-1zM936 19h1v13h-1zM959 19h1v13h-1zM982 19h1v13h-1zM1005 19h1v13h-1zM1027 19h1v13h-1zM1050 19h1v13h-1zM1073 19h1v13h-1zM1096 19h1v13h-1zM1119 19h1v13h-1zM1141 19h1v13h-1zM1164 19h1v13h-1zM1187 19h1v13h-1zM1210 19h1v13h-1zM1233 19h1v13h-1zM1255 19h1v13h-1zM1278 19h1v13h-1zM1301 19h1v13h-1zM1324 19h1v13h-1zM1347 19h1v13h-1zM1369 19h1v13h-1zM1392 19h1v13h-1zM1415 19h1v13h-1zM1438 19h1v13h-1zM891 23h548v5h-548zM884 25h8v1h-8zM884 31h8v1h-8z" fill="#000" shape-rendering="crispEdges"/><path d="M902 20h1v1h-1zM902 22h1v1h-1zM902 28h1v1h-1zM902 30h1v1h-1zM925 20h1v1h-1zM925 22h1v1h-1zM925 28h1v1h-1zM925 30h1v1h-1zM948 20h1v1h-1zM948 22h1v1h-1zM948 28h1v1h-1zM948 30h1v1h-1zM970 20h1v1h-1zM970 22h1v1h-1zM970 28h1v1h-1zM970 30h1v1h-1zM993 20h1v1h-1zM993 22h1v1h-1zM993 28h1v1h-1zM993 30h1v1h-1zM1016 20h1v1h-1zM1016 22h1v1h-1zM1016 28h1v1h-1zM1016 30h1v1h-1zM1039 20h1v1h-1zM1039 22h1v1h-1zM1039 28h1v1h-1zM1039 30h1v1h-1zM1062 20h1v1h-1zM1062 22h1v1h-1zM1062 28h1v1h-1zM1062 30h1v1h-1zM1084 20h1v1h-1zM1084 22h1v1h-1zM1084 28h1v1h-1zM1084 30h1v1h-1zM1107 20h1v1h-1zM1107 22h1v1h-1zM1107 28h1v1h-1zM1107 30h1v1h-1zM1130 20h1v1h-1zM1130 22h1v1h-1zM1130 28h1v1h-1zM1130 30h1v1h-1zM1153 20h1v1h-1zM1153 22h1v1h-1zM1153 28h1v1h-1zM1153 30h1v1h-1zM1176 20h1v1h-1zM1176 22h1v1h-1zM1176 28h1v1h-1zM1176 30h1v1h-1zM1199 20h1v1h-1zM1199 22h1v1h-1zM1199 28h1v1h-1zM1199 30h1v1h-1zM1221 20h1v1h-1zM1221 22h1v1h-1zM1221 28h1v1h-1zM1221 30h1v1h-1zM1244 20h1v1h-1zM1244 22h1v1h-1zM1244 28h1v1h-1zM1244 30h1v1h-1zM1267 20h1v1h-1zM1267 22h1v1h-1zM1267 28h1v1h-1zM1267 30h1v1h-1zM1290 20h1v1h-1zM1290 22h1v1h-1zM1290 28h1v1h-1zM1290 30h1v1h-1zM1313 20h1v1h-1zM1313 22h1v1h-1zM1313 28h1v1h-1zM1313 30h1v1h-1zM1335 20h1v1h-1zM1335 22h1v1h-1zM1335 28h1v1h-1zM1335 30h1v1h-1zM1358 20h1v1h-1zM1358 22h1v1h-1zM1358 28h1v1h-1zM1358 30h1v1h-1zM1381 20h1v1h-1zM1381 22h1v1h-1zM1381 28h1v1h-1zM1381 30h1v1h-1zM1404 20h1v1h-1zM1404 22h1v1h-1zM1404 28h1v1h-1zM1404 30h1v1h-1zM1427 20h1v1h-1zM1427 22h1v1h-1zM1427 28h1v1h-1zM1427 30h1v1h-1z" fill="#b0b0b0" shape-rendering="crispEdges"/><g shape-rendering="crispEdges"><rect x="892" y="24" width="546" height="3" fill="#fff"/></g></svg>
<div class="b" style="left:1px;top:756px;width:1466px;height:1px;background:#d3d3d3"></div>
<div class="b" style="left:123px;top:756px;width:1px;height:39px;background:#d6d6d6"></div>
<div class="b" style="left:501px;top:756px;width:1px;height:39px;background:#d6d6d6"></div>
<div class="b" style="left:635px;top:756px;width:1px;height:39px;background:#d6d6d6"></div>
<div class="b" style="left:701px;top:756px;width:1px;height:39px;background:#d6d6d6"></div>
<div class="b" style="left:786px;top:756px;width:1px;height:39px;background:#d6d6d6"></div>
<div class="b" style="left:852px;top:756px;width:1px;height:39px;background:#d6d6d6"></div>
<svg style="left:6px;top:760px" width="9" height="9"><rect x="0.5" y="0.5" width="8" height="8" fill="#fff" stroke="#000" stroke-width="1"/><path d="M2 4.5H7M4.5 2V7" stroke="#000" stroke-width="1"/></svg>
<svg style="left:0;top:756px" width="1" height="1"><polygon points="511.5,9 514.5,12 519.6,7 519.6,11.5 514.5,16 511.5,13" fill="#008000"/></svg>
<div class="t" style="left:533.30px;top:761.44px;font-size:9.4px;line-height:9.4px;">Runs once</div>
<div class="t c" style="left:568.50px;top:761.27px;font-size:9.6px;line-height:9.6px;">Yes</div>
<div class="t c" style="left:644.30px;top:762.03px;font-size:9.3px;line-height:9.3px;letter-spacing:0.25px">09:00:00</div>
<div class="t c" style="left:719.80px;top:762.03px;font-size:9.3px;line-height:9.3px;letter-spacing:0.25px">23:59:59</div>
<svg style="left:0;top:756px" width="1" height="1"><g transform="scale(0.9 1)" font-family="Liberation Sans" font-size="9.8" text-anchor="middle" fill="#000"><text x="990.22" y="12">0</text><text x="1014.67" y="12">1</text><text x="1040.22" y="12">2</text><text x="1065.78" y="12">3</text><text x="1091.33" y="12">4</text><text x="1116.89" y="12">5</text><text x="1141.33" y="12">6</text><text x="1166.89" y="12">7</text><text x="1192.44" y="12">8</text><text x="1218.00" y="12">9</text><text x="1243.56" y="12">10</text><text x="1268.00" y="12">11</text><text x="1293.56" y="12">12</text><text x="1319.11" y="12">13</text><text x="1344.67" y="12">14</text><text x="1370.22" y="12">15</text><text x="1394.67" y="12">16</text><text x="1420.22" y="12">17</text><text x="1445.78" y="12">18</text><text x="1471.33" y="12">19</text><text x="1496.89" y="12">20</text><text x="1521.33" y="12">21</text><text x="1546.89" y="12">22</text><text x="1572.44" y="12">23</text><text x="1598.00" y="12">24</text></g><path d="M891 19h1v13h-1zM913 19h1v13h-1zM936 19h1v13h-1zM959 19h1v13h-1zM982 19h1v13h-1zM1005 19h1v13h-1zM1027 19h1v13h-1zM1050 19h1v13h-1zM1073 19h1v13h-1zM1096 19h1v13h-1zM1119 19h1v13h-1zM1141 19h1v13h-1zM1164 19h1v13h-1zM1187 19h1v13h-1zM1210 19h1v13h-1zM1233 19h1v13h-1zM1255 19h1v13h-1zM1278 19h1v13h-1zM1301 19h1v13h-1zM1324 19h1v13h-1zM1347 19h1v13h-1zM1369 19h1v13h-1zM1392 19h1v13h-1zM1415 19h1v13h-1zM1438 19h1v13h-1zM891 23h548v5h-548zM884 25h8v1h-8zM884 31h8v1h-8z" fill="#000" shape-rendering="crispEdges"/><path d="M902 20h1v1h-1zM902 22h1v1h-1zM902 28h1v1h-1zM902 30h1v1h-1zM925 20h1v1h-1zM925 22h1v1h-1zM925 28h1v1h-1zM925 30h1v1h-1zM948 20h1v1h-1zM948 22h1v1h-1zM948 28h1v1h-1zM948 30h1v1h-1zM970 20h1v1h-1zM970 22h1v1h-1zM970 28h1v1h-1zM970 30h1v1h-1zM993 20h1v1h-1zM993 22h1v1h-1zM993 28h1v1h-1zM993 30h1v1h-1zM1016 20h1v1h-1zM1016 22h1v1h-1zM1016 28h1v1h-1zM1016 30h1v1h-1zM1039 20h1v1h-1zM1039 22h1v1h-1zM1039 28h1v1h-1zM1039 30h1v1h-1zM1062 20h1v1h-1zM1062 22h1v1h-1zM1062 28h1v1h-1zM1062 30h1v1h-1zM1084 20h1v1h-1zM1084 22h1v1h-1zM1084 28h1v1h-1zM1084 30h1v1h-1zM1107 20h1v1h-1zM1107 22h1v1h-1zM1107 28h1v1h-1zM1107 30h1v1h-1zM1130 20h1v1h-1zM1130 22h1v1h-1zM1130 28h1v1h-1zM1130 30h1v1h-1zM1153 20h1v1h-1zM1153 22h1v1h-1zM1153 28h1v1h-1zM1153 30h1v1h-1zM1176 20h1v1h-1zM1176 22h1v1h-1zM1176 28h1v1h-1zM1176 30h1v1h-1zM1199 20h1v1h-1zM1199 22h1v1h-1zM1199 28h1v1h-1zM1199 30h1v1h-1zM1221 20h1v1h-1zM1221 22h1v1h-1zM1221 28h1v1h-1zM1221 30h1v1h-1zM1244 20h1v1h-1zM1244 22h1v1h-1zM1244 28h1v1h-1zM1244 30h1v1h-1zM1267 20h1v1h-1zM1267 22h1v1h-1zM1267 28h1v1h-1zM1267 30h1v1h-1zM1290 20h1v1h-1zM1290 22h1v1h-1zM1290 28h1v1h-1zM1290 30h1v1h-1zM1313 20h1v1h-1zM1313 22h1v1h-1zM1313 28h1v1h-1zM1313 30h1v1h-1zM1335 20h1v1h-1zM1335 22h1v1h-1zM1335 28h1v1h-1zM1335 30h1v1h-1zM1358 20h1v1h-1zM1358 22h1v1h-1zM1358 28h1v1h-1zM1358 30h1v1h-1zM1381 20h1v1h-1zM1381 22h1v1h-1zM1381 28h1v1h-1zM1381 30h1v1h-1zM1404 20h1v1h-1zM1404 22h1v1h-1zM1404 28h1v1h-1zM1404 30h1v1h-1zM1427 20h1v1h-1zM1427 22h1v1h-1zM1427 28h1v1h-1zM1427 30h1v1h-1z" fill="#b0b0b0" shape-rendering="crispEdges"/><g shape-rendering="crispEdges"><rect x="892" y="24" width="204" height="3" fill="#fff"/><rect x="1097" y="24" width="341" height="3" fill="#98fb98"/></g></svg>
<div class="b" style="left:1px;top:795px;width:1466px;height:1px;background:#d3d3d3"></div>
<div class="b" style="left:123px;top:795px;width:1px;height:39px;background:#d6d6d6"></div>
<div class="b" style="left:501px;top:795px;width:1px;height:39px;background:#d6d6d6"></div>
<div class="b" style="left:635px;top:795px;width:1px;height:39px;background:#d6d6d6"></div>
<div class="b" style="left:701px;top:795px;width:1px;height:39px;background:#d6d6d6"></div>
<div class="b" style="left:786px;top:795px;width:1px;height:39px;background:#d6d6d6"></div>
<div class="b" style="left:852px;top:795px;width:1px;height:39px;background:#d6d6d6"></div>
<svg style="left:6px;top:799px" width="9" height="9"><rect x="0.5" y="0.5" width="8" height="8" fill="#fff" stroke="#000" stroke-width="1"/><path d="M2 4.5H7M4.5 2V7" stroke="#000" stroke-width="1"/></svg>
<svg style="left:0;top:795px" width="1" height="1"><polygon points="511.5,9 514.5,12 519.6,7 519.6,11.5 514.5,16 511.5,13" fill="#008000"/></svg>
<div class="t" style="left:533.30px;top:800.44px;font-size:9.4px;line-height:9.4px;">Runs once</div>
<div class="t c" style="left:568.50px;top:800.27px;font-size:9.6px;line-height:9.6px;">Yes</div>
<div class="t c" style="left:644.30px;top:801.03px;font-size:9.3px;line-height:9.3px;letter-spacing:0.25px">09:00:00</div>
<div class="t c" style="left:719.80px;top:801.03px;font-size:9.3px;line-height:9.3px;letter-spacing:0.25px">23:59:59</div>
<svg style="left:0;top:795px" width="1" height="1"><g transform="scale(0.9 1)" font-family="Liberation Sans" font-size="9.8" text-anchor="middle" fill="#000"><text x="990.22" y="12">0</text><text x="1014.67" y="12">1</text><text x="1040.22" y="12">2</text><text x="1065.78" y="12">3</text><text x="1091.33" y="12">4</text><text x="1116.89" y="12">5</text><text x="1141.33" y="12">6</text><text x="1166.89" y="12">7</text><text x="1192.44" y="12">8</text><text x="1218.00" y="12">9</text><text x="1243.56" y="12">10</text><text x="1268.00" y="12">11</text><text x="1293.56" y="12">12</text><text x="1319.11" y="12">13</text><text x="1344.67" y="12">14</text><text x="1370.22" y="12">15</text><text x="1394.67" y="12">16</text><text x="1420.22" y="12">17</text><text x="1445.78" y="12">18</text><text x="1471.33" y="12">19</text><text x="1496.89" y="12">20</text><text x="1521.33" y="12">21</text><text x="1546.89" y="12">22</text><text x="1572.44" y="12">23</text><text x="1598.00" y="12">24</text></g><path d="M891 19h1v13h-1zM913 19h1v13h-1zM936 19h1v13h-1zM959 19h1v13h-1zM982 19h1v13h-1zM1005 19h1v13h-1zM1027 19h1v13h-1zM1050 19h1v13h-1zM1073 19h1v13h-1zM1096 19h1v13h-1zM1119 19h1v13h-1zM1141 19h1v13h-1zM1164 19h1v13h-1zM1187 19h1v13h-1zM1210 19h1v13h-1zM1233 19h1v13h-1zM1255 19h1v13h-1zM1278 19h1v13h-1zM1301 19h1v13h-1zM1324 19h1v13h-1zM1347 19h1v13h-1zM1369 19h1v13h-1zM1392 19h1v13h-1zM1415 19h1v13h-1zM1438 19h1v13h-1zM891 23h548v5h-548zM884 25h8v1h-8zM884 31h8v1h-8z" fill="#000" shape-rendering="crispEdges"/><path d="M902 20h1v1h-1zM902 22h1v1h-1zM902 28h1v1h-1zM902 30h1v1h-1zM925 20h1v1h-1zM925 22h1v1h-1zM925 28h1v1h-1zM925 30h1v1h-1zM948 20h1v1h-1zM948 22h1v1h-1zM948 28h1v1h-1zM948 30h1v1h-1zM970 20h1v1h-1zM970 22h1v1h-1zM970 28h1v1h-1zM970 30h1v1h-1zM993 20h1v1h-1zM993 22h1v1h-1zM993 28h1v1h-1zM993 30h1v1h-1zM1016 20h1v1h-1zM1016 22h1v1h-1zM1016 28h1v1h-1zM1016 30h1v1h-1zM1039 20h1v1h-1zM1039 22h1v1h-1zM1039 28h1v1h-1zM1039 30h1v1h-1zM1062 20h1v1h-1zM1062 22h1v1h-1zM1062 28h1v1h-1zM1062 30h1v1h-1zM1084 20h1v1h-1zM1084 22h1v1h-1zM1084 28h1v1h-1zM1084 30h1v1h-1zM1107 20h1v1h-1zM1107 22h1v1h-1zM1107 28h1v1h-1zM1107 30h1v1h-1zM1130 20h1v1h-1zM1130 22h1v1h-1zM1130 28h1v1h-1zM1130 30h1v1h-1zM1153 20h1v1h-1zM1153 22h1v1h-1zM1153 28h1v1h-1zM1153 30h1v1h-1zM1176 20h1v1h-1zM1176 22h1v1h-1zM1176 28h1v1h-1zM1176 30h1v1h-1zM1199 20h1v1h-1zM1199 22h1v1h-1zM1199 28h1v1h-1zM1199 30h1v1h-1zM1221 20h1v1h-1zM1221 22h1v1h-1zM1221 28h1v1h-1zM1221 30h1v1h-1zM1244 20h1v1h-1zM1244 22h1v1h-1zM1244 28h1v1h-1zM1244 30h1v1h-1zM1267 20h1v1h-1zM1267 22h1v1h-1zM1267 28h1v1h-1zM1267 30h1v1h-1zM1290 20h1v1h-1zM1290 22h1v1h-1zM1290 28h1v1h-1zM1290 30h1v1h-1zM1313 20h1v1h-1zM1313 22h1v1h-1zM1313 28h1v1h-1zM1313 30h1v1h-1zM1335 20h1v1h-1zM1335 22h1v1h-1zM1335 28h1v1h-1zM1335 30h1v1h-1zM1358 20h1v1h-1zM1358 22h1v1h-1zM1358 28h1v1h-1zM1358 30h1v1h-1zM1381 20h1v1h-1zM1381 22h1v1h-1zM1381 28h1v1h-1zM1381 30h1v1h-1zM1404 20h1v1h-1zM1404 22h1v1h-1zM1404 28h1v1h-1zM1404 30h1v1h-1zM1427 20h1v1h-1zM1427 22h1v1h-1zM1427 28h1v1h-1zM1427 30h1v1h-1z" fill="#b0b0b0" shape-rendering="crispEdges"/><g shape-rendering="crispEdges"><rect x="892" y="24" width="204" height="3" fill="#fff"/><rect x="1097" y="24" width="341" height="3" fill="#98fb98"/></g></svg>
<div class="b" style="left:18px;top:367px;width:478px;height:461px;background:#fcfcfc;overflow:hidden">
<div class="bl" style="left:-12px;top:-0.20000000000000018px;width:106px;height:12px;background:#d8d8d8;filter:blur(6.5px)"></div>
<div class="bl" style="left:105px;top:-0.20000000000000018px;width:27px;height:12px;background:#d8d8d8;filter:blur(6.5px)"></div>
<div class="bl" style="left:134px;top:-0.20000000000000018px;width:201px;height:12px;background:#d8d8d8;filter:blur(6.5px)"></div>
<div class="bl" style="left:-12px;top:40.6px;width:106px;height:12px;background:#d8d8d8;filter:blur(6.5px)"></div>
<div class="bl" style="left:105px;top:40.6px;width:27px;height:12px;background:#d8d8d8;filter:blur(6.5px)"></div>
<div class="bl" style="left:134px;top:40.6px;width:174px;height:12px;background:#d8d8d8;filter:blur(6.5px)"></div>
<div class="bl" style="left:-12px;top:80.6px;width:106px;height:12px;background:#d8d8d8;filter:blur(6.5px)"></div>
<div class="bl" style="left:105px;top:80.6px;width:27px;height:12px;background:#d8d8d8;filter:blur(6.5px)"></div>
<div class="bl" style="left:134px;top:80.6px;width:239px;height:12px;background:#d8d8d8;filter:blur(6.5px)"></div>
<div class="bl" style="left:-12px;top:119.4px;width:35px;height:12px;background:#d8d8d8;filter:blur(6.5px)"></div>
<div class="bl" style="left:105px;top:119.4px;width:27px;height:12px;background:#d8d8d8;filter:blur(6.5px)"></div>
<div class="bl" style="left:134px;top:119.4px;width:138px;height:12px;background:#d8d8d8;filter:blur(6.5px)"></div>
<div class="bl" style="left:-12px;top:159px;width:35px;height:12px;background:#d8d8d8;filter:blur(6.5px)"></div>
<div class="bl" style="left:105px;top:159px;width:27px;height:12px;background:#d8d8d8;filter:blur(6.5px)"></div>
<div class="bl" style="left:134px;top:159px;width:232px;height:12px;background:#d8d8d8;filter:blur(6.5px)"></div>
<div class="bl" style="left:-12px;top:197.5px;width:35px;height:12px;background:#d8d8d8;filter:blur(6.5px)"></div>
<div class="bl" style="left:105px;top:197.5px;width:27px;height:12px;background:#d8d8d8;filter:blur(6.5px)"></div>
<div class="bl" style="left:134px;top:197.5px;width:217px;height:12px;background:#d8d8d8;filter:blur(6.5px)"></div>
<div class="bl" style="left:-12px;top:236px;width:35px;height:12px;background:#d8d8d8;filter:blur(6.5px)"></div>
<div class="bl" style="left:105px;top:236px;width:27px;height:12px;background:#d8d8d8;filter:blur(6.5px)"></div>
<div class="bl" style="left:134px;top:236px;width:205px;height:12px;background:#d8d8d8;filter:blur(6.5px)"></div>
<div class="bl" style="left:-12px;top:275.5px;width:35px;height:12px;background:#d8d8d8;filter:blur(6.5px)"></div>
<div class="bl" style="left:105px;top:275.5px;width:27px;height:12px;background:#d8d8d8;filter:blur(6.5px)"></div>
<div class="bl" style="left:134px;top:275.5px;width:188px;height:12px;background:#d8d8d8;filter:blur(6.5px)"></div>
<div class="bl" style="left:-12px;top:314.5px;width:35px;height:12px;background:#d8d8d8;filter:blur(6.5px)"></div>
<div class="bl" style="left:105px;top:314.5px;width:27px;height:12px;background:#d8d8d8;filter:blur(6.5px)"></div>
<div class="bl" style="left:134px;top:314.5px;width:181px;height:12px;background:#d8d8d8;filter:blur(6.5px)"></div>
<div class="bl" style="left:-12px;top:353.5px;width:35px;height:12px;background:#d8d8d8;filter:blur(6.5px)"></div>
<div class="bl" style="left:105px;top:353.5px;width:27px;height:12px;background:#d8d8d8;filter:blur(6.5px)"></div>
<div class="bl" style="left:134px;top:353.5px;width:184px;height:12px;background:#d8d8d8;filter:blur(6.5px)"></div>
<div class="bl" style="left:-12px;top:392.5px;width:35px;height:12px;background:#d8d8d8;filter:blur(6.5px)"></div>
<div class="bl" style="left:105px;top:392.5px;width:27px;height:12px;background:#d8d8d8;filter:blur(6.5px)"></div>
<div class="bl" style="left:134px;top:392.5px;width:110px;height:12px;background:#d8d8d8;filter:blur(6.5px)"></div>
<div class="bl" style="left:-12px;top:431.5px;width:35px;height:12px;background:#d8d8d8;filter:blur(6.5px)"></div>
<div class="bl" style="left:105px;top:431.5px;width:27px;height:12px;background:#d8d8d8;filter:blur(6.5px)"></div>
<div class="bl" style="left:134px;top:431.5px;width:222px;height:12px;background:#d8d8d8;filter:blur(6.5px)"></div>
</div>
<div class="b" style="left:17px;top:371px;width:1px;height:10px;background:#fcd68c"></div>
<div class="b" style="left:17px;top:410px;width:1px;height:10px;background:#fcd68c"></div>
<div class="b" style="left:17px;top:449px;width:1px;height:10px;background:#fcd68c"></div>
<div class="b" style="left:17px;top:493px;width:1px;height:3px;background:linear-gradient(#f0b050,#a04060)"></div>
<div class="b" style="left:17px;top:532px;width:1px;height:3px;background:linear-gradient(#f0b050,#a04060)"></div>
<div class="b" style="left:17px;top:571px;width:1px;height:3px;background:linear-gradient(#f0b050,#a04060)"></div>
<div class="b" style="left:17px;top:610px;width:1px;height:3px;background:linear-gradient(#f0b050,#a04060)"></div>
<div class="b" style="left:17px;top:649px;width:1px;height:3px;background:linear-gradient(#f0b050,#a04060)"></div>
<div class="b" style="left:17px;top:688px;width:1px;height:3px;background:linear-gradient(#f0b050,#a04060)"></div>
<div class="b" style="left:17px;top:727px;width:1px;height:3px;background:linear-gradient(#f0b050,#a04060)"></div>
<div class="b" style="left:17px;top:766px;width:1px;height:3px;background:linear-gradient(#f0b050,#a04060)"></div>
<div class="b" style="left:17px;top:805px;width:1px;height:3px;background:linear-gradient(#f0b050,#a04060)"></div>
<div class="b" style="left:0px;top:827px;width:1471px;height:1px;background:#111"></div>
<div class="b" style="left:246px;top:827px;width:44px;height:1px;background:#555"></div>
</body></html>
